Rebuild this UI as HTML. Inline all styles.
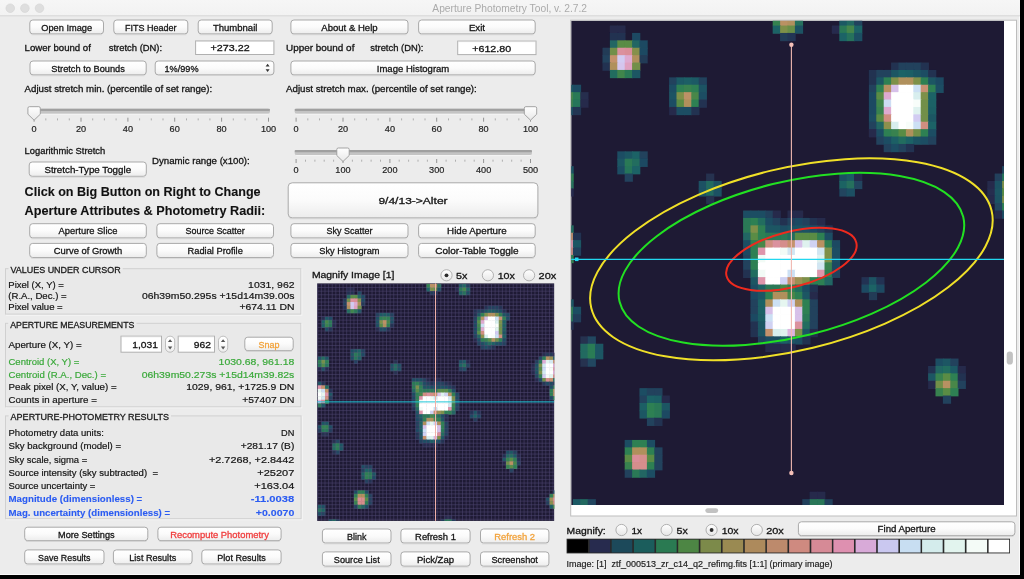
<!DOCTYPE html><html><head><meta charset="utf-8"><style>html,body{margin:0;padding:0;background:#000;overflow:hidden}svg{display:block}text{white-space:pre}</style></head><body><svg width="1024" height="579" viewBox="0 0 1024 579" font-family='"Liberation Sans", sans-serif'>
<defs>
<linearGradient id="bg" x1="0" y1="0" x2="0" y2="1"><stop offset="0" stop-color="#ffffff"/><stop offset="0.5" stop-color="#fbfbfb"/><stop offset="1" stop-color="#ececec"/></linearGradient>
<linearGradient id="trk" x1="0" y1="0" x2="0" y2="1"><stop offset="0" stop-color="#9c9c9c"/><stop offset="1" stop-color="#cfcfcf"/></linearGradient>
<linearGradient id="thm" x1="0" y1="0" x2="0" y2="1"><stop offset="0" stop-color="#ffffff"/><stop offset="1" stop-color="#e8e8e8"/></linearGradient>
<linearGradient id="rad" x1="0" y1="0" x2="0" y2="1"><stop offset="0" stop-color="#ffffff"/><stop offset="1" stop-color="#e6e6e6"/></linearGradient>
<linearGradient id="tb" x1="0" y1="0" x2="0" y2="1"><stop offset="0" stop-color="#f6f6f6"/><stop offset="1" stop-color="#f2f2f2"/></linearGradient>
</defs>
<rect x="0" y="0" width="1024" height="579" fill="#000"/>
<rect x="0" y="0" width="1020" height="575" fill="#ececec"/>
<path d="M1019.5,0 V574.5 H0" fill="none" stroke="#fafafa" stroke-width="1"/>
<rect x="0" y="0" width="1020" height="15.8" fill="url(#tb)"/>
<line x1="0" y1="15.8" x2="1020" y2="15.8" stroke="#d6d6d6" stroke-width="1"/>
<circle cx="10.25" cy="8.2" r="4.3" fill="#dedede" stroke="#d3d3d3" stroke-width="0.6"/>
<circle cx="24.9" cy="8.2" r="4.3" fill="#dedede" stroke="#d3d3d3" stroke-width="0.6"/>
<circle cx="39.5" cy="8.2" r="4.3" fill="#dedede" stroke="#d3d3d3" stroke-width="0.6"/>
<text x="432.3" y="12.3" font-size="10.4" fill="#ababab" stroke="#ababab" stroke-width="0" font-weight="normal" text-anchor="start" textLength="154.7" lengthAdjust="spacingAndGlyphs">Aperture Photometry Tool, v. 2.7.2</text>
<rect x="29.8" y="20.0" width="73.7" height="13.9" rx="3" fill="url(#bg)" stroke="#a9a9a9" stroke-width="1"/>
<line x1="31.3" y1="34.7" x2="102.0" y2="34.7" stroke="#d2d2d2" stroke-width="0.8"/>
<text x="41.3" y="30.6" font-size="9.6" fill="#141414" stroke="#141414" stroke-width="0.3" font-weight="normal" text-anchor="start" textLength="50.8" lengthAdjust="spacingAndGlyphs">Open Image</text>
<rect x="113.8" y="20.0" width="74.0" height="13.9" rx="3" fill="url(#bg)" stroke="#a9a9a9" stroke-width="1"/>
<line x1="115.3" y1="34.7" x2="186.3" y2="34.7" stroke="#d2d2d2" stroke-width="0.8"/>
<text x="125.0" y="30.6" font-size="9.6" fill="#141414" stroke="#141414" stroke-width="0.3" font-weight="normal" text-anchor="start" textLength="51.6" lengthAdjust="spacingAndGlyphs">FITS Header</text>
<rect x="198.2" y="20.0" width="74.0" height="13.9" rx="3" fill="url(#bg)" stroke="#a9a9a9" stroke-width="1"/>
<line x1="199.7" y1="34.7" x2="270.7" y2="34.7" stroke="#d2d2d2" stroke-width="0.8"/>
<text x="212.9" y="30.6" font-size="9.6" fill="#141414" stroke="#141414" stroke-width="0.3" font-weight="normal" text-anchor="start" textLength="44.5" lengthAdjust="spacingAndGlyphs">Thumbnail</text>
<rect x="290.9" y="20.0" width="117.1" height="13.9" rx="3" fill="url(#bg)" stroke="#a9a9a9" stroke-width="1"/>
<line x1="292.4" y1="34.7" x2="406.5" y2="34.7" stroke="#d2d2d2" stroke-width="0.8"/>
<text x="321.3" y="30.6" font-size="9.6" fill="#141414" stroke="#141414" stroke-width="0.3" font-weight="normal" text-anchor="start" textLength="56.3" lengthAdjust="spacingAndGlyphs">About &amp; Help</text>
<rect x="418.6" y="20.0" width="116.6" height="13.9" rx="3" fill="url(#bg)" stroke="#a9a9a9" stroke-width="1"/>
<line x1="420.1" y1="34.7" x2="533.7" y2="34.7" stroke="#d2d2d2" stroke-width="0.8"/>
<text x="468.9" y="30.6" font-size="9.6" fill="#141414" stroke="#141414" stroke-width="0.3" font-weight="normal" text-anchor="start" textLength="16.1" lengthAdjust="spacingAndGlyphs">Exit</text>
<text x="24.6" y="50.9" font-size="9.6" fill="#141414" stroke="#141414" stroke-width="0.3" font-weight="normal" text-anchor="start" textLength="66.3" lengthAdjust="spacingAndGlyphs">Lower bound of</text>
<text x="108.8" y="50.9" font-size="9.6" fill="#141414" stroke="#141414" stroke-width="0.3" font-weight="normal" text-anchor="start" textLength="53.3" lengthAdjust="spacingAndGlyphs">stretch (DN):</text>
<rect x="195.6" y="40.9" width="78.3" height="13.6" fill="#ffffff" stroke="#b0b0b0" stroke-width="1"/>
<line x1="196.1" y1="41.4" x2="273.4" y2="41.4" stroke="#d8d8d8" stroke-width="1"/>
<text x="210.6" y="51.3" font-size="9.6" fill="#141414" stroke="#141414" stroke-width="0.3" font-weight="normal" text-anchor="start" textLength="39.0" lengthAdjust="spacingAndGlyphs">+273.22</text>
<text x="286.0" y="50.9" font-size="9.6" fill="#141414" stroke="#141414" stroke-width="0.3" font-weight="normal" text-anchor="start" textLength="68.4" lengthAdjust="spacingAndGlyphs">Upper bound of</text>
<text x="370.2" y="50.9" font-size="9.6" fill="#141414" stroke="#141414" stroke-width="0.3" font-weight="normal" text-anchor="start" textLength="53.3" lengthAdjust="spacingAndGlyphs">stretch (DN):</text>
<rect x="457.7" y="41.1" width="78.3" height="13.5" fill="#ffffff" stroke="#b0b0b0" stroke-width="1"/>
<line x1="458.2" y1="41.6" x2="535.5" y2="41.6" stroke="#d8d8d8" stroke-width="1"/>
<text x="472.2" y="51.5" font-size="9.6" fill="#141414" stroke="#141414" stroke-width="0.3" font-weight="normal" text-anchor="start" textLength="39.0" lengthAdjust="spacingAndGlyphs">+612.80</text>
<rect x="30.0" y="61.0" width="116.2" height="13.9" rx="3" fill="url(#bg)" stroke="#a9a9a9" stroke-width="1"/>
<line x1="31.5" y1="75.7" x2="144.7" y2="75.7" stroke="#d2d2d2" stroke-width="0.8"/>
<text x="51.3" y="71.5" font-size="9.6" fill="#141414" stroke="#141414" stroke-width="0.3" font-weight="normal" text-anchor="start" textLength="73.6" lengthAdjust="spacingAndGlyphs">Stretch to Bounds</text>
<rect x="155.2" y="61.0" width="118.7" height="13.9" rx="3" fill="url(#bg)" stroke="#a9a9a9" stroke-width="1"/>
<text x="164.5" y="71.6" font-size="9.6" fill="#141414" stroke="#141414" stroke-width="0.3" font-weight="normal" text-anchor="start" textLength="34.1" lengthAdjust="spacingAndGlyphs">1%/99%</text>
<path d="M265.6,66.6 L267.6,63.8 L269.6,66.6 Z M265.6,69.2 L267.6,72.0 L269.6,69.2 Z" fill="#333"/>
<rect x="290.9" y="61.0" width="244.3" height="13.9" rx="3" fill="url(#bg)" stroke="#a9a9a9" stroke-width="1"/>
<line x1="292.4" y1="75.7" x2="533.7" y2="75.7" stroke="#d2d2d2" stroke-width="0.8"/>
<text x="376.8" y="71.5" font-size="9.6" fill="#141414" stroke="#141414" stroke-width="0.3" font-weight="normal" text-anchor="start" textLength="72.5" lengthAdjust="spacingAndGlyphs">Image Histogram</text>
<text x="24.6" y="92.2" font-size="9.6" fill="#141414" stroke="#141414" stroke-width="0.3" font-weight="normal" text-anchor="start" textLength="187.6" lengthAdjust="spacingAndGlyphs">Adjust stretch min. (percentile of set range):</text>
<text x="286.0" y="92.2" font-size="9.6" fill="#141414" stroke="#141414" stroke-width="0.3" font-weight="normal" text-anchor="start" textLength="190.8" lengthAdjust="spacingAndGlyphs">Adjust stretch max. (percentile of set range):</text>
<rect x="32.6" y="108.8" width="237.4" height="5" rx="2.2" fill="#c4c4c4"/>
<rect x="32.6" y="108.8" width="237.4" height="2.1" rx="1" fill="#a0a0a0"/>
<line x1="34.1" y1="114.3" x2="268.5" y2="114.3" stroke="#f6f6f6" stroke-width="0.8"/>
<line x1="34.1" y1="117.7" x2="34.1" y2="121.7" stroke="#8a8a8a" stroke-width="0.9"/>
<line x1="45.8" y1="118.4" x2="45.8" y2="120.4" stroke="#a0a0a0" stroke-width="0.8"/>
<line x1="57.5" y1="118.4" x2="57.5" y2="120.4" stroke="#a0a0a0" stroke-width="0.8"/>
<line x1="69.3" y1="118.4" x2="69.3" y2="120.4" stroke="#a0a0a0" stroke-width="0.8"/>
<text x="31.6" y="132.0" font-size="9" fill="#222222" stroke="#222222" stroke-width="0.18" font-weight="normal" text-anchor="start" textLength="5.1" lengthAdjust="spacingAndGlyphs">0</text>
<line x1="81.0" y1="117.7" x2="81.0" y2="121.7" stroke="#8a8a8a" stroke-width="0.9"/>
<line x1="92.7" y1="118.4" x2="92.7" y2="120.4" stroke="#a0a0a0" stroke-width="0.8"/>
<line x1="104.4" y1="118.4" x2="104.4" y2="120.4" stroke="#a0a0a0" stroke-width="0.8"/>
<line x1="116.1" y1="118.4" x2="116.1" y2="120.4" stroke="#a0a0a0" stroke-width="0.8"/>
<text x="75.9" y="132.0" font-size="9" fill="#222222" stroke="#222222" stroke-width="0.18" font-weight="normal" text-anchor="start" textLength="10.2" lengthAdjust="spacingAndGlyphs">20</text>
<line x1="127.9" y1="117.7" x2="127.9" y2="121.7" stroke="#8a8a8a" stroke-width="0.9"/>
<line x1="139.6" y1="118.4" x2="139.6" y2="120.4" stroke="#a0a0a0" stroke-width="0.8"/>
<line x1="151.3" y1="118.4" x2="151.3" y2="120.4" stroke="#a0a0a0" stroke-width="0.8"/>
<line x1="163.0" y1="118.4" x2="163.0" y2="120.4" stroke="#a0a0a0" stroke-width="0.8"/>
<text x="122.8" y="132.0" font-size="9" fill="#222222" stroke="#222222" stroke-width="0.18" font-weight="normal" text-anchor="start" textLength="10.2" lengthAdjust="spacingAndGlyphs">40</text>
<line x1="174.7" y1="117.7" x2="174.7" y2="121.7" stroke="#8a8a8a" stroke-width="0.9"/>
<line x1="186.5" y1="118.4" x2="186.5" y2="120.4" stroke="#a0a0a0" stroke-width="0.8"/>
<line x1="198.2" y1="118.4" x2="198.2" y2="120.4" stroke="#a0a0a0" stroke-width="0.8"/>
<line x1="209.9" y1="118.4" x2="209.9" y2="120.4" stroke="#a0a0a0" stroke-width="0.8"/>
<text x="169.6" y="132.0" font-size="9" fill="#222222" stroke="#222222" stroke-width="0.18" font-weight="normal" text-anchor="start" textLength="10.2" lengthAdjust="spacingAndGlyphs">60</text>
<line x1="221.6" y1="117.7" x2="221.6" y2="121.7" stroke="#8a8a8a" stroke-width="0.9"/>
<line x1="233.3" y1="118.4" x2="233.3" y2="120.4" stroke="#a0a0a0" stroke-width="0.8"/>
<line x1="245.1" y1="118.4" x2="245.1" y2="120.4" stroke="#a0a0a0" stroke-width="0.8"/>
<line x1="256.8" y1="118.4" x2="256.8" y2="120.4" stroke="#a0a0a0" stroke-width="0.8"/>
<text x="216.5" y="132.0" font-size="9" fill="#222222" stroke="#222222" stroke-width="0.18" font-weight="normal" text-anchor="start" textLength="10.2" lengthAdjust="spacingAndGlyphs">80</text>
<line x1="268.5" y1="117.7" x2="268.5" y2="121.7" stroke="#8a8a8a" stroke-width="0.9"/>
<text x="260.9" y="132.0" font-size="9" fill="#222222" stroke="#222222" stroke-width="0.18" font-weight="normal" text-anchor="start" textLength="15.3" lengthAdjust="spacingAndGlyphs">100</text>
<path d="M27.9,108.2 Q27.9,106.7 29.4,106.7 L38.8,106.7 Q40.3,106.7 40.3,108.2 L40.3,114.2 L34.1,120.2 L27.9,114.2 Z" fill="url(#thm)" stroke="#9a9a9a" stroke-width="0.9"/>
<rect x="294.6" y="108.8" width="237.4" height="5" rx="2.2" fill="#c4c4c4"/>
<rect x="294.6" y="108.8" width="237.4" height="2.1" rx="1" fill="#a0a0a0"/>
<line x1="296.1" y1="114.3" x2="530.5" y2="114.3" stroke="#f6f6f6" stroke-width="0.8"/>
<line x1="296.1" y1="117.7" x2="296.1" y2="121.7" stroke="#8a8a8a" stroke-width="0.9"/>
<line x1="307.8" y1="118.4" x2="307.8" y2="120.4" stroke="#a0a0a0" stroke-width="0.8"/>
<line x1="319.5" y1="118.4" x2="319.5" y2="120.4" stroke="#a0a0a0" stroke-width="0.8"/>
<line x1="331.3" y1="118.4" x2="331.3" y2="120.4" stroke="#a0a0a0" stroke-width="0.8"/>
<text x="293.6" y="132.0" font-size="9" fill="#222222" stroke="#222222" stroke-width="0.18" font-weight="normal" text-anchor="start" textLength="5.1" lengthAdjust="spacingAndGlyphs">0</text>
<line x1="343.0" y1="117.7" x2="343.0" y2="121.7" stroke="#8a8a8a" stroke-width="0.9"/>
<line x1="354.7" y1="118.4" x2="354.7" y2="120.4" stroke="#a0a0a0" stroke-width="0.8"/>
<line x1="366.4" y1="118.4" x2="366.4" y2="120.4" stroke="#a0a0a0" stroke-width="0.8"/>
<line x1="378.1" y1="118.4" x2="378.1" y2="120.4" stroke="#a0a0a0" stroke-width="0.8"/>
<text x="337.9" y="132.0" font-size="9" fill="#222222" stroke="#222222" stroke-width="0.18" font-weight="normal" text-anchor="start" textLength="10.2" lengthAdjust="spacingAndGlyphs">20</text>
<line x1="389.9" y1="117.7" x2="389.9" y2="121.7" stroke="#8a8a8a" stroke-width="0.9"/>
<line x1="401.6" y1="118.4" x2="401.6" y2="120.4" stroke="#a0a0a0" stroke-width="0.8"/>
<line x1="413.3" y1="118.4" x2="413.3" y2="120.4" stroke="#a0a0a0" stroke-width="0.8"/>
<line x1="425.0" y1="118.4" x2="425.0" y2="120.4" stroke="#a0a0a0" stroke-width="0.8"/>
<text x="384.8" y="132.0" font-size="9" fill="#222222" stroke="#222222" stroke-width="0.18" font-weight="normal" text-anchor="start" textLength="10.2" lengthAdjust="spacingAndGlyphs">40</text>
<line x1="436.7" y1="117.7" x2="436.7" y2="121.7" stroke="#8a8a8a" stroke-width="0.9"/>
<line x1="448.5" y1="118.4" x2="448.5" y2="120.4" stroke="#a0a0a0" stroke-width="0.8"/>
<line x1="460.2" y1="118.4" x2="460.2" y2="120.4" stroke="#a0a0a0" stroke-width="0.8"/>
<line x1="471.9" y1="118.4" x2="471.9" y2="120.4" stroke="#a0a0a0" stroke-width="0.8"/>
<text x="431.6" y="132.0" font-size="9" fill="#222222" stroke="#222222" stroke-width="0.18" font-weight="normal" text-anchor="start" textLength="10.2" lengthAdjust="spacingAndGlyphs">60</text>
<line x1="483.6" y1="117.7" x2="483.6" y2="121.7" stroke="#8a8a8a" stroke-width="0.9"/>
<line x1="495.3" y1="118.4" x2="495.3" y2="120.4" stroke="#a0a0a0" stroke-width="0.8"/>
<line x1="507.1" y1="118.4" x2="507.1" y2="120.4" stroke="#a0a0a0" stroke-width="0.8"/>
<line x1="518.8" y1="118.4" x2="518.8" y2="120.4" stroke="#a0a0a0" stroke-width="0.8"/>
<text x="478.5" y="132.0" font-size="9" fill="#222222" stroke="#222222" stroke-width="0.18" font-weight="normal" text-anchor="start" textLength="10.2" lengthAdjust="spacingAndGlyphs">80</text>
<line x1="530.5" y1="117.7" x2="530.5" y2="121.7" stroke="#8a8a8a" stroke-width="0.9"/>
<text x="522.9" y="132.0" font-size="9" fill="#222222" stroke="#222222" stroke-width="0.18" font-weight="normal" text-anchor="start" textLength="15.3" lengthAdjust="spacingAndGlyphs">100</text>
<path d="M524.3,108.2 Q524.3,106.7 525.8,106.7 L535.2,106.7 Q536.7,106.7 536.7,108.2 L536.7,114.2 L530.5,120.2 L524.3,114.2 Z" fill="url(#thm)" stroke="#9a9a9a" stroke-width="0.9"/>
<text x="24.6" y="153.7" font-size="9.6" fill="#141414" stroke="#141414" stroke-width="0.3" font-weight="normal" text-anchor="start" textLength="80.6" lengthAdjust="spacingAndGlyphs">Logarithmic Stretch</text>
<rect x="29.2" y="162.0" width="117.1" height="14.3" rx="3" fill="url(#bg)" stroke="#a9a9a9" stroke-width="1"/>
<line x1="30.7" y1="177.1" x2="144.8" y2="177.1" stroke="#d2d2d2" stroke-width="0.8"/>
<text x="44.4" y="172.8" font-size="9.6" fill="#141414" stroke="#141414" stroke-width="0.3" font-weight="normal" text-anchor="start" textLength="86.7" lengthAdjust="spacingAndGlyphs">Stretch-Type Toggle</text>
<text x="152.0" y="163.8" font-size="9.6" fill="#141414" stroke="#141414" stroke-width="0.3" font-weight="normal" text-anchor="start" textLength="97.7" lengthAdjust="spacingAndGlyphs">Dynamic range (x100):</text>
<rect x="294.6" y="150.1" width="237.4" height="5" rx="2.2" fill="#c4c4c4"/>
<rect x="294.6" y="150.1" width="237.4" height="2.1" rx="1" fill="#a0a0a0"/>
<line x1="296.1" y1="155.6" x2="530.5" y2="155.6" stroke="#f6f6f6" stroke-width="0.8"/>
<line x1="296.1" y1="159.0" x2="296.1" y2="163.0" stroke="#8a8a8a" stroke-width="0.9"/>
<line x1="305.5" y1="159.7" x2="305.5" y2="161.7" stroke="#a0a0a0" stroke-width="0.8"/>
<line x1="314.9" y1="159.7" x2="314.9" y2="161.7" stroke="#a0a0a0" stroke-width="0.8"/>
<line x1="324.2" y1="159.7" x2="324.2" y2="161.7" stroke="#a0a0a0" stroke-width="0.8"/>
<line x1="333.6" y1="159.7" x2="333.6" y2="161.7" stroke="#a0a0a0" stroke-width="0.8"/>
<text x="293.6" y="173.3" font-size="9" fill="#222222" stroke="#222222" stroke-width="0.18" font-weight="normal" text-anchor="start" textLength="5.1" lengthAdjust="spacingAndGlyphs">0</text>
<line x1="343.0" y1="159.0" x2="343.0" y2="163.0" stroke="#8a8a8a" stroke-width="0.9"/>
<line x1="352.4" y1="159.7" x2="352.4" y2="161.7" stroke="#a0a0a0" stroke-width="0.8"/>
<line x1="361.7" y1="159.7" x2="361.7" y2="161.7" stroke="#a0a0a0" stroke-width="0.8"/>
<line x1="371.1" y1="159.7" x2="371.1" y2="161.7" stroke="#a0a0a0" stroke-width="0.8"/>
<line x1="380.5" y1="159.7" x2="380.5" y2="161.7" stroke="#a0a0a0" stroke-width="0.8"/>
<text x="335.3" y="173.3" font-size="9" fill="#222222" stroke="#222222" stroke-width="0.18" font-weight="normal" text-anchor="start" textLength="15.3" lengthAdjust="spacingAndGlyphs">100</text>
<line x1="389.9" y1="159.0" x2="389.9" y2="163.0" stroke="#8a8a8a" stroke-width="0.9"/>
<line x1="399.2" y1="159.7" x2="399.2" y2="161.7" stroke="#a0a0a0" stroke-width="0.8"/>
<line x1="408.6" y1="159.7" x2="408.6" y2="161.7" stroke="#a0a0a0" stroke-width="0.8"/>
<line x1="418.0" y1="159.7" x2="418.0" y2="161.7" stroke="#a0a0a0" stroke-width="0.8"/>
<line x1="427.4" y1="159.7" x2="427.4" y2="161.7" stroke="#a0a0a0" stroke-width="0.8"/>
<text x="382.2" y="173.3" font-size="9" fill="#222222" stroke="#222222" stroke-width="0.18" font-weight="normal" text-anchor="start" textLength="15.3" lengthAdjust="spacingAndGlyphs">200</text>
<line x1="436.7" y1="159.0" x2="436.7" y2="163.0" stroke="#8a8a8a" stroke-width="0.9"/>
<line x1="446.1" y1="159.7" x2="446.1" y2="161.7" stroke="#a0a0a0" stroke-width="0.8"/>
<line x1="455.5" y1="159.7" x2="455.5" y2="161.7" stroke="#a0a0a0" stroke-width="0.8"/>
<line x1="464.9" y1="159.7" x2="464.9" y2="161.7" stroke="#a0a0a0" stroke-width="0.8"/>
<line x1="474.2" y1="159.7" x2="474.2" y2="161.7" stroke="#a0a0a0" stroke-width="0.8"/>
<text x="429.1" y="173.3" font-size="9" fill="#222222" stroke="#222222" stroke-width="0.18" font-weight="normal" text-anchor="start" textLength="15.3" lengthAdjust="spacingAndGlyphs">300</text>
<line x1="483.6" y1="159.0" x2="483.6" y2="163.0" stroke="#8a8a8a" stroke-width="0.9"/>
<line x1="493.0" y1="159.7" x2="493.0" y2="161.7" stroke="#a0a0a0" stroke-width="0.8"/>
<line x1="502.4" y1="159.7" x2="502.4" y2="161.7" stroke="#a0a0a0" stroke-width="0.8"/>
<line x1="511.7" y1="159.7" x2="511.7" y2="161.7" stroke="#a0a0a0" stroke-width="0.8"/>
<line x1="521.1" y1="159.7" x2="521.1" y2="161.7" stroke="#a0a0a0" stroke-width="0.8"/>
<text x="476.0" y="173.3" font-size="9" fill="#222222" stroke="#222222" stroke-width="0.18" font-weight="normal" text-anchor="start" textLength="15.3" lengthAdjust="spacingAndGlyphs">400</text>
<line x1="530.5" y1="159.0" x2="530.5" y2="163.0" stroke="#8a8a8a" stroke-width="0.9"/>
<text x="522.9" y="173.3" font-size="9" fill="#222222" stroke="#222222" stroke-width="0.18" font-weight="normal" text-anchor="start" textLength="15.3" lengthAdjust="spacingAndGlyphs">500</text>
<path d="M336.8,149.5 Q336.8,148.0 338.3,148.0 L347.7,148.0 Q349.2,148.0 349.2,149.5 L349.2,155.5 L343.0,161.5 L336.8,155.5 Z" fill="url(#thm)" stroke="#9a9a9a" stroke-width="0.9"/>
<text x="24.6" y="195.5" font-size="12" fill="#111" stroke="#111" stroke-width="0.1" font-weight="bold" text-anchor="start" textLength="236.0" lengthAdjust="spacingAndGlyphs">Click on Big Button on Right to Change</text>
<text x="24.6" y="214.6" font-size="12" fill="#111" stroke="#111" stroke-width="0.1" font-weight="bold" text-anchor="start" textLength="240.6" lengthAdjust="spacingAndGlyphs">Aperture Attributes &amp; Photometry Radii:</text>
<rect x="288.2" y="182.8" width="249.7" height="35.1" rx="4" fill="url(#bg)" stroke="#a9a9a9" stroke-width="1"/>
<line x1="289.7" y1="218.7" x2="536.4" y2="218.7" stroke="#d2d2d2" stroke-width="0.8"/>
<text x="378.4" y="203.8" font-size="9.6" fill="#141414" stroke="#141414" stroke-width="0.3" font-weight="normal" text-anchor="start" textLength="69.2" lengthAdjust="spacingAndGlyphs">9/4/13-&gt;Alter</text>
<rect x="29.7" y="223.7" width="116.6" height="14.2" rx="3" fill="url(#bg)" stroke="#a9a9a9" stroke-width="1"/>
<line x1="31.2" y1="238.7" x2="144.8" y2="238.7" stroke="#d2d2d2" stroke-width="0.8"/>
<text x="58.6" y="234.4" font-size="9.6" fill="#141414" stroke="#141414" stroke-width="0.3" font-weight="normal" text-anchor="start" textLength="58.8" lengthAdjust="spacingAndGlyphs">Aperture Slice</text>
<rect x="156.9" y="223.7" width="116.6" height="14.2" rx="3" fill="url(#bg)" stroke="#a9a9a9" stroke-width="1"/>
<line x1="158.4" y1="238.7" x2="272.0" y2="238.7" stroke="#d2d2d2" stroke-width="0.8"/>
<text x="185.5" y="234.4" font-size="9.6" fill="#141414" stroke="#141414" stroke-width="0.3" font-weight="normal" text-anchor="start" textLength="59.3" lengthAdjust="spacingAndGlyphs">Source Scatter</text>
<rect x="290.9" y="223.7" width="117.1" height="14.2" rx="3" fill="url(#bg)" stroke="#a9a9a9" stroke-width="1"/>
<line x1="292.4" y1="238.7" x2="406.5" y2="238.7" stroke="#d2d2d2" stroke-width="0.8"/>
<text x="326.5" y="234.4" font-size="9.6" fill="#141414" stroke="#141414" stroke-width="0.3" font-weight="normal" text-anchor="start" textLength="45.9" lengthAdjust="spacingAndGlyphs">Sky Scatter</text>
<rect x="418.6" y="223.7" width="116.6" height="14.2" rx="3" fill="url(#bg)" stroke="#a9a9a9" stroke-width="1"/>
<line x1="420.1" y1="238.7" x2="533.7" y2="238.7" stroke="#d2d2d2" stroke-width="0.8"/>
<text x="447.1" y="234.4" font-size="9.6" fill="#141414" stroke="#141414" stroke-width="0.3" font-weight="normal" text-anchor="start" textLength="59.6" lengthAdjust="spacingAndGlyphs">Hide Aperture</text>
<rect x="29.7" y="243.4" width="116.6" height="14.1" rx="3" fill="url(#bg)" stroke="#a9a9a9" stroke-width="1"/>
<line x1="31.2" y1="258.3" x2="144.8" y2="258.3" stroke="#d2d2d2" stroke-width="0.8"/>
<text x="53.8" y="254.0" font-size="9.6" fill="#141414" stroke="#141414" stroke-width="0.3" font-weight="normal" text-anchor="start" textLength="68.4" lengthAdjust="spacingAndGlyphs">Curve of Growth</text>
<rect x="156.9" y="243.4" width="116.6" height="14.1" rx="3" fill="url(#bg)" stroke="#a9a9a9" stroke-width="1"/>
<line x1="158.4" y1="258.3" x2="272.0" y2="258.3" stroke="#d2d2d2" stroke-width="0.8"/>
<text x="187.6" y="254.0" font-size="9.6" fill="#141414" stroke="#141414" stroke-width="0.3" font-weight="normal" text-anchor="start" textLength="55.2" lengthAdjust="spacingAndGlyphs">Radial Profile</text>
<rect x="290.9" y="243.4" width="117.1" height="14.1" rx="3" fill="url(#bg)" stroke="#a9a9a9" stroke-width="1"/>
<line x1="292.4" y1="258.3" x2="406.5" y2="258.3" stroke="#d2d2d2" stroke-width="0.8"/>
<text x="319.3" y="254.0" font-size="9.6" fill="#141414" stroke="#141414" stroke-width="0.3" font-weight="normal" text-anchor="start" textLength="60.2" lengthAdjust="spacingAndGlyphs">Sky Histogram</text>
<rect x="418.6" y="243.4" width="116.6" height="14.1" rx="3" fill="url(#bg)" stroke="#a9a9a9" stroke-width="1"/>
<line x1="420.1" y1="258.3" x2="533.7" y2="258.3" stroke="#d2d2d2" stroke-width="0.8"/>
<text x="435.2" y="254.0" font-size="9.6" fill="#141414" stroke="#141414" stroke-width="0.3" font-weight="normal" text-anchor="start" textLength="83.4" lengthAdjust="spacingAndGlyphs">Color-Table Toggle</text>
<rect x="6.5" y="269.7" width="295.3" height="45.4" fill="none" stroke="#f8f8f8" stroke-width="1"/>
<rect x="5.5" y="268.7" width="295.3" height="45.4" fill="#e9e9e9" stroke="#d0d0d0" stroke-width="1"/>
<rect x="8.5" y="267.2" width="114.2" height="3" fill="#ececec"/>
<text x="10.5" y="272.8" font-size="9.6" fill="#1a1a1a" stroke="#1a1a1a" stroke-width="0.3" font-weight="normal" text-anchor="start" textLength="110.2" lengthAdjust="spacingAndGlyphs">VALUES UNDER CURSOR</text>
<text x="8.3" y="287.8" font-size="8.9" fill="#141414" stroke="#141414" stroke-width="0.18" font-weight="normal" text-anchor="start" textLength="55.6" lengthAdjust="spacingAndGlyphs">Pixel (X, Y) =</text>
<text x="248.1" y="287.8" font-size="8.9" fill="#141414" stroke="#141414" stroke-width="0.18" font-weight="normal" text-anchor="start" textLength="46.4" lengthAdjust="spacingAndGlyphs">1031, 962</text>
<text x="8.3" y="298.8" font-size="8.9" fill="#141414" stroke="#141414" stroke-width="0.18" font-weight="normal" text-anchor="start" textLength="58.3" lengthAdjust="spacingAndGlyphs">(R.A., Dec.) =</text>
<text x="141.9" y="298.8" font-size="8.9" fill="#141414" stroke="#141414" stroke-width="0.18" font-weight="normal" text-anchor="start" textLength="152.6" lengthAdjust="spacingAndGlyphs">06h39m50.295s +15d14m39.00s</text>
<text x="8.3" y="309.8" font-size="8.9" fill="#141414" stroke="#141414" stroke-width="0.18" font-weight="normal" text-anchor="start" textLength="54.4" lengthAdjust="spacingAndGlyphs">Pixel value =</text>
<text x="239.4" y="309.8" font-size="8.9" fill="#141414" stroke="#141414" stroke-width="0.18" font-weight="normal" text-anchor="start" textLength="55.1" lengthAdjust="spacingAndGlyphs">+674.11 DN</text>
<rect x="6.5" y="324.3" width="295.3" height="83.5" fill="none" stroke="#f8f8f8" stroke-width="1"/>
<rect x="5.5" y="323.3" width="295.3" height="83.5" fill="#e9e9e9" stroke="#d0d0d0" stroke-width="1"/>
<rect x="8.2" y="321.8" width="128.2" height="3" fill="#ececec"/>
<text x="10.2" y="327.5" font-size="9.6" fill="#1a1a1a" stroke="#1a1a1a" stroke-width="0.3" font-weight="normal" text-anchor="start" textLength="124.2" lengthAdjust="spacingAndGlyphs">APERTURE MEASUREMENTS</text>
<text x="8.5" y="348.3" font-size="8.9" fill="#141414" stroke="#141414" stroke-width="0.18" font-weight="normal" text-anchor="start" textLength="73.2" lengthAdjust="spacingAndGlyphs">Aperture (X, Y) =</text>
<rect x="121.0" y="336.2" width="40.5" height="16.0" fill="#ffffff" stroke="#b0b0b0" stroke-width="1"/>
<line x1="121.5" y1="336.7" x2="161.0" y2="336.7" stroke="#d8d8d8" stroke-width="1"/>
<text x="132.3" y="347.8" font-size="9.6" fill="#141414" stroke="#141414" stroke-width="0.3" font-weight="normal" text-anchor="start" textLength="25.7" lengthAdjust="spacingAndGlyphs">1,031</text>
<rect x="178.2" y="336.2" width="36.3" height="16.0" fill="#ffffff" stroke="#b0b0b0" stroke-width="1"/>
<line x1="178.7" y1="336.7" x2="214.0" y2="336.7" stroke="#d8d8d8" stroke-width="1"/>
<text x="193.8" y="347.8" font-size="9.6" fill="#141414" stroke="#141414" stroke-width="0.3" font-weight="normal" text-anchor="start" textLength="17.2" lengthAdjust="spacingAndGlyphs">962</text>
<rect x="165.5" y="336.2" width="9.2" height="16" rx="4.5" fill="url(#bg)" stroke="#b0b0b0" stroke-width="0.8"/>
<path d="M167.9,342.0 L170.1,339.2 L172.3,342.0 Z M167.9,346.6 L170.1,349.4 L172.3,346.6 Z" fill="#555"/>
<rect x="218.5" y="336.2" width="9.2" height="16" rx="4.5" fill="url(#bg)" stroke="#b0b0b0" stroke-width="0.8"/>
<path d="M220.9,342.0 L223.1,339.2 L225.3,342.0 Z M220.9,346.6 L223.1,349.4 L225.3,346.6 Z" fill="#555"/>
<rect x="244.8" y="337.2" width="48.4" height="13.5" rx="3" fill="url(#bg)" stroke="#a9a9a9" stroke-width="1"/>
<line x1="246.3" y1="351.5" x2="291.7" y2="351.5" stroke="#d2d2d2" stroke-width="0.8"/>
<text x="258.6" y="347.6" font-size="9.6" fill="#f2a23a" stroke="#f2a23a" stroke-width="0.3" font-weight="normal" text-anchor="start" textLength="20.9" lengthAdjust="spacingAndGlyphs">Snap</text>
<text x="8.5" y="365.2" font-size="8.9" fill="#3aa93a" stroke="#3aa93a" stroke-width="0.18" font-weight="normal" text-anchor="start" textLength="70.8" lengthAdjust="spacingAndGlyphs">Centroid (X, Y) =</text>
<text x="218.6" y="365.2" font-size="8.9" fill="#3aa93a" stroke="#3aa93a" stroke-width="0.18" font-weight="normal" text-anchor="start" textLength="75.7" lengthAdjust="spacingAndGlyphs">1030.68, 961.18</text>
<text x="8.5" y="377.9" font-size="8.9" fill="#3aa93a" stroke="#3aa93a" stroke-width="0.18" font-weight="normal" text-anchor="start" textLength="97.5" lengthAdjust="spacingAndGlyphs">Centroid (R.A., Dec.) =</text>
<text x="141.7" y="377.9" font-size="8.9" fill="#3aa93a" stroke="#3aa93a" stroke-width="0.18" font-weight="normal" text-anchor="start" textLength="152.6" lengthAdjust="spacingAndGlyphs">06h39m50.273s +15d14m39.82s</text>
<text x="8.5" y="390.3" font-size="8.9" fill="#141414" stroke="#141414" stroke-width="0.18" font-weight="normal" text-anchor="start" textLength="108.1" lengthAdjust="spacingAndGlyphs">Peak pixel (X, Y, value) =</text>
<text x="186.2" y="390.3" font-size="8.9" fill="#141414" stroke="#141414" stroke-width="0.18" font-weight="normal" text-anchor="start" textLength="108.1" lengthAdjust="spacingAndGlyphs">1029, 961, +1725.9 DN</text>
<text x="8.5" y="403.1" font-size="8.9" fill="#141414" stroke="#141414" stroke-width="0.18" font-weight="normal" text-anchor="start" textLength="88.4" lengthAdjust="spacingAndGlyphs">Counts in aperture =</text>
<text x="242.2" y="403.1" font-size="8.9" fill="#141414" stroke="#141414" stroke-width="0.18" font-weight="normal" text-anchor="start" textLength="52.1" lengthAdjust="spacingAndGlyphs">+57407 DN</text>
<rect x="6.5" y="416.9" width="295.6" height="102.8" fill="none" stroke="#f8f8f8" stroke-width="1"/>
<rect x="5.5" y="415.9" width="295.6" height="102.8" fill="#e9e9e9" stroke="#d0d0d0" stroke-width="1"/>
<rect x="8.6" y="414.4" width="162.4" height="3" fill="#ececec"/>
<text x="10.6" y="419.8" font-size="9.6" fill="#1a1a1a" stroke="#1a1a1a" stroke-width="0.3" font-weight="normal" text-anchor="start" textLength="158.4" lengthAdjust="spacingAndGlyphs">APERTURE-PHOTOMETRY RESULTS</text>
<text x="8.5" y="436.2" font-size="8.9" fill="#141414" stroke="#141414" stroke-width="0.18" font-weight="normal" text-anchor="start" textLength="95.3" lengthAdjust="spacingAndGlyphs">Photometry data units:</text>
<text x="281.0" y="436.2" font-size="8.9" fill="#141414" stroke="#141414" stroke-width="0.18" font-weight="normal" text-anchor="start" textLength="13.3" lengthAdjust="spacingAndGlyphs">DN</text>
<text x="8.5" y="449.3" font-size="8.9" fill="#141414" stroke="#141414" stroke-width="0.18" font-weight="normal" text-anchor="start" textLength="112.6" lengthAdjust="spacingAndGlyphs">Sky background (model) =</text>
<text x="240.7" y="449.3" font-size="8.9" fill="#141414" stroke="#141414" stroke-width="0.18" font-weight="normal" text-anchor="start" textLength="53.6" lengthAdjust="spacingAndGlyphs">+281.17 (B)</text>
<text x="8.5" y="462.6" font-size="8.9" fill="#141414" stroke="#141414" stroke-width="0.18" font-weight="normal" text-anchor="start" textLength="78.7" lengthAdjust="spacingAndGlyphs">Sky scale, sigma =</text>
<text x="208.9" y="462.6" font-size="8.9" fill="#141414" stroke="#141414" stroke-width="0.18" font-weight="normal" text-anchor="start" textLength="85.4" lengthAdjust="spacingAndGlyphs">+2.7268, +2.8442</text>
<text x="8.5" y="475.7" font-size="8.9" fill="#141414" stroke="#141414" stroke-width="0.18" font-weight="normal" text-anchor="start" textLength="149.5" lengthAdjust="spacingAndGlyphs">Source intensity (sky subtracted)  =</text>
<text x="257.3" y="475.7" font-size="8.9" fill="#141414" stroke="#141414" stroke-width="0.18" font-weight="normal" text-anchor="start" textLength="37.0" lengthAdjust="spacingAndGlyphs">+25207</text>
<text x="8.5" y="488.7" font-size="8.9" fill="#141414" stroke="#141414" stroke-width="0.18" font-weight="normal" text-anchor="start" textLength="86.9" lengthAdjust="spacingAndGlyphs">Source uncertainty =</text>
<text x="254.3" y="488.7" font-size="8.9" fill="#141414" stroke="#141414" stroke-width="0.18" font-weight="normal" text-anchor="start" textLength="40.0" lengthAdjust="spacingAndGlyphs">+163.04</text>
<text x="8.5" y="502.2" font-size="9.2" fill="#2b5cf2" stroke="#2b5cf2" stroke-width="0.1" font-weight="bold" text-anchor="start" textLength="133.8" lengthAdjust="spacingAndGlyphs">Magnitude (dimensionless) =</text>
<text x="250.7" y="502.2" font-size="9.2" fill="#2b5cf2" stroke="#2b5cf2" stroke-width="0.1" font-weight="bold" text-anchor="start" textLength="43.6" lengthAdjust="spacingAndGlyphs">-11.0038</text>
<text x="8.5" y="515.5" font-size="9.2" fill="#2b5cf2" stroke="#2b5cf2" stroke-width="0.1" font-weight="bold" text-anchor="start" textLength="161.6" lengthAdjust="spacingAndGlyphs">Mag. uncertainty (dimensionless) =</text>
<text x="255.8" y="515.5" font-size="9.2" fill="#2b5cf2" stroke="#2b5cf2" stroke-width="0.1" font-weight="bold" text-anchor="start" textLength="38.5" lengthAdjust="spacingAndGlyphs">+0.0070</text>
<rect x="24.7" y="527.2" width="123.1" height="13.5" rx="3" fill="url(#bg)" stroke="#a9a9a9" stroke-width="1"/>
<line x1="26.2" y1="541.5" x2="146.3" y2="541.5" stroke="#d2d2d2" stroke-width="0.8"/>
<text x="58.0" y="537.6" font-size="9.6" fill="#141414" stroke="#141414" stroke-width="0.3" font-weight="normal" text-anchor="start" textLength="56.6" lengthAdjust="spacingAndGlyphs">More Settings</text>
<rect x="157.9" y="527.2" width="123.2" height="13.5" rx="3" fill="url(#bg)" stroke="#a9a9a9" stroke-width="1"/>
<line x1="159.4" y1="541.5" x2="279.6" y2="541.5" stroke="#d2d2d2" stroke-width="0.8"/>
<text x="170.2" y="537.6" font-size="9.6" fill="#f03c3c" stroke="#f03c3c" stroke-width="0.3" font-weight="normal" text-anchor="start" textLength="98.7" lengthAdjust="spacingAndGlyphs">Recompute Photometry</text>
<rect x="24.7" y="549.9" width="79.3" height="14.1" rx="3" fill="url(#bg)" stroke="#a9a9a9" stroke-width="1"/>
<line x1="26.2" y1="564.8" x2="102.5" y2="564.8" stroke="#d2d2d2" stroke-width="0.8"/>
<text x="38.1" y="560.6" font-size="9.6" fill="#141414" stroke="#141414" stroke-width="0.3" font-weight="normal" text-anchor="start" textLength="52.4" lengthAdjust="spacingAndGlyphs">Save Results</text>
<rect x="113.4" y="549.9" width="78.7" height="14.1" rx="3" fill="url(#bg)" stroke="#a9a9a9" stroke-width="1"/>
<line x1="114.9" y1="564.8" x2="190.6" y2="564.8" stroke="#d2d2d2" stroke-width="0.8"/>
<text x="129.3" y="560.6" font-size="9.6" fill="#141414" stroke="#141414" stroke-width="0.3" font-weight="normal" text-anchor="start" textLength="46.9" lengthAdjust="spacingAndGlyphs">List Results</text>
<rect x="201.8" y="549.9" width="79.3" height="14.1" rx="3" fill="url(#bg)" stroke="#a9a9a9" stroke-width="1"/>
<line x1="203.3" y1="564.8" x2="279.6" y2="564.8" stroke="#d2d2d2" stroke-width="0.8"/>
<text x="217.3" y="560.6" font-size="9.6" fill="#141414" stroke="#141414" stroke-width="0.3" font-weight="normal" text-anchor="start" textLength="48.4" lengthAdjust="spacingAndGlyphs">Plot Results</text>
<text x="311.9" y="278.0" font-size="9.6" fill="#141414" stroke="#141414" stroke-width="0.3" font-weight="normal" text-anchor="start" textLength="82.5" lengthAdjust="spacingAndGlyphs">Magnify Image [1]</text>
<circle cx="446.5" cy="275.3" r="5.6" fill="url(#rad)" stroke="#a8a8a8" stroke-width="0.9"/>
<circle cx="446.5" cy="275.3" r="1.9" fill="#2a2a2a"/>
<text x="456.0" y="278.7" font-size="9.6" fill="#141414" stroke="#141414" stroke-width="0.3" font-weight="normal" text-anchor="start" textLength="11.4" lengthAdjust="spacingAndGlyphs">5x</text>
<circle cx="487.9" cy="275.3" r="5.6" fill="url(#rad)" stroke="#a8a8a8" stroke-width="0.9"/>
<text x="497.7" y="278.7" font-size="9.6" fill="#141414" stroke="#141414" stroke-width="0.3" font-weight="normal" text-anchor="start" textLength="17.2" lengthAdjust="spacingAndGlyphs">10x</text>
<circle cx="529.1" cy="275.3" r="5.6" fill="url(#rad)" stroke="#a8a8a8" stroke-width="0.9"/>
<text x="538.6" y="278.7" font-size="9.6" fill="#141414" stroke="#141414" stroke-width="0.3" font-weight="normal" text-anchor="start" textLength="17.7" lengthAdjust="spacingAndGlyphs">20x</text>
<svg x="317.1" y="283.2" width="237.30" height="237.70" viewBox="317.1 283.2 237.30 237.70" overflow="hidden">
<rect x="317.1" y="283.2" width="237.30" height="237.70" fill="#1e1a34"/>
<filter id="softm" x="-2%" y="-2%" width="104%" height="104%"><feGaussianBlur stdDeviation="0.45"/></filter><g filter="url(#softm)">
<rect x="426.34" y="283.92" width="4.1" height="4.1" fill="#358250"/>
<rect x="429.96" y="283.92" width="4.1" height="4.1" fill="#ba9164"/>
<rect x="433.58" y="283.92" width="4.1" height="4.1" fill="#b2905e"/>
<rect x="437.20" y="283.92" width="4.1" height="4.1" fill="#25705d"/>
<rect x="458.92" y="283.92" width="4.1" height="4.1" fill="#1e5864"/>
<rect x="462.54" y="283.92" width="4.1" height="4.1" fill="#216862"/>
<rect x="466.16" y="283.92" width="4.1" height="4.1" fill="#21425d"/>
<rect x="346.70" y="287.54" width="4.1" height="4.1" fill="#262a4c"/>
<rect x="350.32" y="287.54" width="4.1" height="4.1" fill="#262a4c"/>
<rect x="426.34" y="287.54" width="4.1" height="4.1" fill="#1f6465"/>
<rect x="429.96" y="287.54" width="4.1" height="4.1" fill="#7e904a"/>
<rect x="433.58" y="287.54" width="4.1" height="4.1" fill="#698e46"/>
<rect x="437.20" y="287.54" width="4.1" height="4.1" fill="#1f5363"/>
<rect x="455.30" y="287.54" width="4.1" height="4.1" fill="#262c4d"/>
<rect x="458.92" y="287.54" width="4.1" height="4.1" fill="#2a7857"/>
<rect x="462.54" y="287.54" width="4.1" height="4.1" fill="#44864b"/>
<rect x="466.16" y="287.54" width="4.1" height="4.1" fill="#1e6366"/>
<rect x="346.70" y="291.16" width="4.1" height="4.1" fill="#243251"/>
<rect x="350.32" y="291.16" width="4.1" height="4.1" fill="#243251"/>
<rect x="357.56" y="291.16" width="4.1" height="4.1" fill="#1f4a62"/>
<rect x="429.96" y="291.16" width="4.1" height="4.1" fill="#223e59"/>
<rect x="433.58" y="291.16" width="4.1" height="4.1" fill="#243554"/>
<rect x="458.92" y="291.16" width="4.1" height="4.1" fill="#1e6366"/>
<rect x="462.54" y="291.16" width="4.1" height="4.1" fill="#27725b"/>
<rect x="466.16" y="291.16" width="4.1" height="4.1" fill="#1f4f63"/>
<rect x="346.70" y="294.78" width="4.1" height="4.1" fill="#206664"/>
<rect x="350.32" y="294.78" width="4.1" height="4.1" fill="#5a8c44"/>
<rect x="353.94" y="294.78" width="4.1" height="4.1" fill="#5a8c44"/>
<rect x="357.56" y="294.78" width="4.1" height="4.1" fill="#206664"/>
<rect x="361.18" y="294.78" width="4.1" height="4.1" fill="#1f4a62"/>
<rect x="343.08" y="298.40" width="4.1" height="4.1" fill="#233a57"/>
<rect x="346.70" y="298.40" width="4.1" height="4.1" fill="#728f48"/>
<rect x="350.32" y="298.40" width="4.1" height="4.1" fill="#db919e"/>
<rect x="353.94" y="298.40" width="4.1" height="4.1" fill="#da8e98"/>
<rect x="357.56" y="298.40" width="4.1" height="4.1" fill="#86904c"/>
<rect x="361.18" y="298.40" width="4.1" height="4.1" fill="#1f4a62"/>
<rect x="343.08" y="302.02" width="4.1" height="4.1" fill="#21425d"/>
<rect x="346.70" y="302.02" width="4.1" height="4.1" fill="#c4926c"/>
<rect x="350.32" y="302.02" width="4.1" height="4.1" fill="#d2ccf2"/>
<rect x="353.94" y="302.02" width="4.1" height="4.1" fill="#deaad0"/>
<rect x="357.56" y="302.02" width="4.1" height="4.1" fill="#b0905c"/>
<rect x="361.18" y="302.02" width="4.1" height="4.1" fill="#233a57"/>
<rect x="343.08" y="305.64" width="4.1" height="4.1" fill="#243251"/>
<rect x="346.70" y="305.64" width="4.1" height="4.1" fill="#b0905c"/>
<rect x="350.32" y="305.64" width="4.1" height="4.1" fill="#d5c6ee"/>
<rect x="353.94" y="305.64" width="4.1" height="4.1" fill="#dfa1c0"/>
<rect x="357.56" y="305.64" width="4.1" height="4.1" fill="#728f48"/>
<rect x="484.26" y="305.64" width="4.1" height="4.1" fill="#243251"/>
<rect x="487.88" y="305.64" width="4.1" height="4.1" fill="#21425d"/>
<rect x="491.50" y="305.64" width="4.1" height="4.1" fill="#21425d"/>
<rect x="495.12" y="305.64" width="4.1" height="4.1" fill="#21425d"/>
<rect x="498.74" y="305.64" width="4.1" height="4.1" fill="#243251"/>
<rect x="346.70" y="309.26" width="4.1" height="4.1" fill="#246d5f"/>
<rect x="350.32" y="309.26" width="4.1" height="4.1" fill="#40854c"/>
<rect x="353.94" y="309.26" width="4.1" height="4.1" fill="#2a7957"/>
<rect x="357.56" y="309.26" width="4.1" height="4.1" fill="#1f5664"/>
<rect x="473.40" y="309.26" width="4.1" height="4.1" fill="#243251"/>
<rect x="477.02" y="309.26" width="4.1" height="4.1" fill="#21425d"/>
<rect x="480.64" y="309.26" width="4.1" height="4.1" fill="#21425d"/>
<rect x="484.26" y="309.26" width="4.1" height="4.1" fill="#1f5664"/>
<rect x="487.88" y="309.26" width="4.1" height="4.1" fill="#1e6266"/>
<rect x="491.50" y="309.26" width="4.1" height="4.1" fill="#1e5e65"/>
<rect x="495.12" y="309.26" width="4.1" height="4.1" fill="#1f5664"/>
<rect x="498.74" y="309.26" width="4.1" height="4.1" fill="#1f4e63"/>
<rect x="502.36" y="309.26" width="4.1" height="4.1" fill="#243251"/>
<rect x="375.66" y="312.88" width="4.1" height="4.1" fill="#21425d"/>
<rect x="379.28" y="312.88" width="4.1" height="4.1" fill="#1e5a65"/>
<rect x="382.90" y="312.88" width="4.1" height="4.1" fill="#1e5e65"/>
<rect x="386.52" y="312.88" width="4.1" height="4.1" fill="#1e5a65"/>
<rect x="390.14" y="312.88" width="4.1" height="4.1" fill="#21425d"/>
<rect x="473.40" y="312.88" width="4.1" height="4.1" fill="#243251"/>
<rect x="477.02" y="312.88" width="4.1" height="4.1" fill="#1f5664"/>
<rect x="480.64" y="312.88" width="4.1" height="4.1" fill="#2e8052"/>
<rect x="484.26" y="312.88" width="4.1" height="4.1" fill="#7e904a"/>
<rect x="487.88" y="312.88" width="4.1" height="4.1" fill="#b0905c"/>
<rect x="491.50" y="312.88" width="4.1" height="4.1" fill="#b0905c"/>
<rect x="495.12" y="312.88" width="4.1" height="4.1" fill="#7e904a"/>
<rect x="498.74" y="312.88" width="4.1" height="4.1" fill="#2e8052"/>
<rect x="502.36" y="312.88" width="4.1" height="4.1" fill="#1f5664"/>
<rect x="505.98" y="312.88" width="4.1" height="4.1" fill="#1f4a62"/>
<rect x="321.36" y="316.50" width="4.1" height="4.1" fill="#252d4e"/>
<rect x="324.98" y="316.50" width="4.1" height="4.1" fill="#1e5965"/>
<rect x="328.60" y="316.50" width="4.1" height="4.1" fill="#1f4b62"/>
<rect x="375.66" y="316.50" width="4.1" height="4.1" fill="#1f4e63"/>
<rect x="379.28" y="316.50" width="4.1" height="4.1" fill="#2e8052"/>
<rect x="382.90" y="316.50" width="4.1" height="4.1" fill="#37824f"/>
<rect x="386.52" y="316.50" width="4.1" height="4.1" fill="#2e8052"/>
<rect x="390.14" y="316.50" width="4.1" height="4.1" fill="#1f5263"/>
<rect x="473.40" y="316.50" width="4.1" height="4.1" fill="#21425d"/>
<rect x="477.02" y="316.50" width="4.1" height="4.1" fill="#2e8052"/>
<rect x="480.64" y="316.50" width="4.1" height="4.1" fill="#b89162"/>
<rect x="484.26" y="316.50" width="4.1" height="4.1" fill="#d7c0e9"/>
<rect x="487.88" y="316.50" width="4.1" height="4.1" fill="#ffffff"/>
<rect x="491.50" y="316.50" width="4.1" height="4.1" fill="#ffffff"/>
<rect x="495.12" y="316.50" width="4.1" height="4.1" fill="#cce0f4"/>
<rect x="498.74" y="316.50" width="4.1" height="4.1" fill="#c89173"/>
<rect x="502.36" y="316.50" width="4.1" height="4.1" fill="#2e8052"/>
<rect x="505.98" y="316.50" width="4.1" height="4.1" fill="#1f4e63"/>
<rect x="321.36" y="320.12" width="4.1" height="4.1" fill="#1f6465"/>
<rect x="324.98" y="320.12" width="4.1" height="4.1" fill="#47874a"/>
<rect x="328.60" y="320.12" width="4.1" height="4.1" fill="#2a7956"/>
<rect x="332.22" y="320.12" width="4.1" height="4.1" fill="#252d4e"/>
<rect x="375.66" y="320.12" width="4.1" height="4.1" fill="#1f5263"/>
<rect x="379.28" y="320.12" width="4.1" height="4.1" fill="#7e904a"/>
<rect x="382.90" y="320.12" width="4.1" height="4.1" fill="#bc9166"/>
<rect x="386.52" y="320.12" width="4.1" height="4.1" fill="#48874a"/>
<rect x="390.14" y="320.12" width="4.1" height="4.1" fill="#1f4e63"/>
<rect x="473.40" y="320.12" width="4.1" height="4.1" fill="#1f4a62"/>
<rect x="477.02" y="320.12" width="4.1" height="4.1" fill="#5a8c44"/>
<rect x="480.64" y="320.12" width="4.1" height="4.1" fill="#deaad0"/>
<rect x="484.26" y="320.12" width="4.1" height="4.1" fill="#ffffff"/>
<rect x="487.88" y="320.12" width="4.1" height="4.1" fill="#ffffff"/>
<rect x="491.50" y="320.12" width="4.1" height="4.1" fill="#ffffff"/>
<rect x="495.12" y="320.12" width="4.1" height="4.1" fill="#d8eeee"/>
<rect x="498.74" y="320.12" width="4.1" height="4.1" fill="#7e904a"/>
<rect x="502.36" y="320.12" width="4.1" height="4.1" fill="#1e6266"/>
<rect x="321.36" y="323.74" width="4.1" height="4.1" fill="#1e5f65"/>
<rect x="324.98" y="323.74" width="4.1" height="4.1" fill="#39834e"/>
<rect x="328.60" y="323.74" width="4.1" height="4.1" fill="#27745a"/>
<rect x="332.22" y="323.74" width="4.1" height="4.1" fill="#26294b"/>
<rect x="375.66" y="323.74" width="4.1" height="4.1" fill="#1f4e63"/>
<rect x="379.28" y="323.74" width="4.1" height="4.1" fill="#5a8c44"/>
<rect x="382.90" y="323.74" width="4.1" height="4.1" fill="#b0905c"/>
<rect x="386.52" y="323.74" width="4.1" height="4.1" fill="#2e8052"/>
<rect x="390.14" y="323.74" width="4.1" height="4.1" fill="#243251"/>
<rect x="473.40" y="323.74" width="4.1" height="4.1" fill="#1f4a62"/>
<rect x="477.02" y="323.74" width="4.1" height="4.1" fill="#40854c"/>
<rect x="480.64" y="323.74" width="4.1" height="4.1" fill="#cdddf4"/>
<rect x="484.26" y="323.74" width="4.1" height="4.1" fill="#ffffff"/>
<rect x="487.88" y="323.74" width="4.1" height="4.1" fill="#ffffff"/>
<rect x="491.50" y="323.74" width="4.1" height="4.1" fill="#ffffff"/>
<rect x="495.12" y="323.74" width="4.1" height="4.1" fill="#f8fdfa"/>
<rect x="498.74" y="323.74" width="4.1" height="4.1" fill="#728f48"/>
<rect x="502.36" y="323.74" width="4.1" height="4.1" fill="#1e6266"/>
<rect x="324.98" y="327.36" width="4.1" height="4.1" fill="#1f4b62"/>
<rect x="328.60" y="327.36" width="4.1" height="4.1" fill="#243453"/>
<rect x="375.66" y="327.36" width="4.1" height="4.1" fill="#262a4c"/>
<rect x="379.28" y="327.36" width="4.1" height="4.1" fill="#1f4e63"/>
<rect x="382.90" y="327.36" width="4.1" height="4.1" fill="#1f4e63"/>
<rect x="386.52" y="327.36" width="4.1" height="4.1" fill="#243251"/>
<rect x="473.40" y="327.36" width="4.1" height="4.1" fill="#1f4a62"/>
<rect x="477.02" y="327.36" width="4.1" height="4.1" fill="#37824f"/>
<rect x="480.64" y="327.36" width="4.1" height="4.1" fill="#deaad0"/>
<rect x="484.26" y="327.36" width="4.1" height="4.1" fill="#ffffff"/>
<rect x="487.88" y="327.36" width="4.1" height="4.1" fill="#ffffff"/>
<rect x="491.50" y="327.36" width="4.1" height="4.1" fill="#ffffff"/>
<rect x="495.12" y="327.36" width="4.1" height="4.1" fill="#dff2ef"/>
<rect x="498.74" y="327.36" width="4.1" height="4.1" fill="#728f48"/>
<rect x="502.36" y="327.36" width="4.1" height="4.1" fill="#1e5e65"/>
<rect x="473.40" y="330.98" width="4.1" height="4.1" fill="#1f4e63"/>
<rect x="477.02" y="330.98" width="4.1" height="4.1" fill="#5a8c44"/>
<rect x="480.64" y="330.98" width="4.1" height="4.1" fill="#d08e80"/>
<rect x="484.26" y="330.98" width="4.1" height="4.1" fill="#ffffff"/>
<rect x="487.88" y="330.98" width="4.1" height="4.1" fill="#ffffff"/>
<rect x="491.50" y="330.98" width="4.1" height="4.1" fill="#ffffff"/>
<rect x="495.12" y="330.98" width="4.1" height="4.1" fill="#d2ccf2"/>
<rect x="498.74" y="330.98" width="4.1" height="4.1" fill="#728f48"/>
<rect x="502.36" y="330.98" width="4.1" height="4.1" fill="#1f5664"/>
<rect x="473.40" y="334.60" width="4.1" height="4.1" fill="#21425d"/>
<rect x="477.02" y="334.60" width="4.1" height="4.1" fill="#206664"/>
<rect x="480.64" y="334.60" width="4.1" height="4.1" fill="#8d904e"/>
<rect x="484.26" y="334.60" width="4.1" height="4.1" fill="#d8eeee"/>
<rect x="487.88" y="334.60" width="4.1" height="4.1" fill="#ffffff"/>
<rect x="491.50" y="334.60" width="4.1" height="4.1" fill="#f8fdfa"/>
<rect x="495.12" y="334.60" width="4.1" height="4.1" fill="#cce0f4"/>
<rect x="498.74" y="334.60" width="4.1" height="4.1" fill="#d08e80"/>
<rect x="502.36" y="334.60" width="4.1" height="4.1" fill="#1e6266"/>
<rect x="473.40" y="338.22" width="4.1" height="4.1" fill="#262a4c"/>
<rect x="477.02" y="338.22" width="4.1" height="4.1" fill="#1f4e63"/>
<rect x="480.64" y="338.22" width="4.1" height="4.1" fill="#2e8052"/>
<rect x="484.26" y="338.22" width="4.1" height="4.1" fill="#37824f"/>
<rect x="487.88" y="338.22" width="4.1" height="4.1" fill="#5a8c44"/>
<rect x="491.50" y="338.22" width="4.1" height="4.1" fill="#b0905c"/>
<rect x="495.12" y="338.22" width="4.1" height="4.1" fill="#728f48"/>
<rect x="498.74" y="338.22" width="4.1" height="4.1" fill="#2e8052"/>
<rect x="502.36" y="338.22" width="4.1" height="4.1" fill="#1f4e63"/>
<rect x="477.02" y="341.84" width="4.1" height="4.1" fill="#21425d"/>
<rect x="480.64" y="341.84" width="4.1" height="4.1" fill="#1f4e63"/>
<rect x="484.26" y="341.84" width="4.1" height="4.1" fill="#1e5e65"/>
<rect x="487.88" y="341.84" width="4.1" height="4.1" fill="#246d5f"/>
<rect x="491.50" y="341.84" width="4.1" height="4.1" fill="#1e6266"/>
<rect x="495.12" y="341.84" width="4.1" height="4.1" fill="#1f5263"/>
<rect x="498.74" y="341.84" width="4.1" height="4.1" fill="#1f4e63"/>
<rect x="502.36" y="341.84" width="4.1" height="4.1" fill="#21425d"/>
<rect x="480.64" y="345.46" width="4.1" height="4.1" fill="#21425d"/>
<rect x="484.26" y="345.46" width="4.1" height="4.1" fill="#1f4e63"/>
<rect x="487.88" y="345.46" width="4.1" height="4.1" fill="#21425d"/>
<rect x="491.50" y="345.46" width="4.1" height="4.1" fill="#243251"/>
<rect x="350.32" y="349.08" width="4.1" height="4.1" fill="#1f4e63"/>
<rect x="353.94" y="349.08" width="4.1" height="4.1" fill="#1f5664"/>
<rect x="357.56" y="349.08" width="4.1" height="4.1" fill="#1e6266"/>
<rect x="361.18" y="349.08" width="4.1" height="4.1" fill="#21425d"/>
<rect x="350.32" y="352.70" width="4.1" height="4.1" fill="#1f5664"/>
<rect x="353.94" y="352.70" width="4.1" height="4.1" fill="#2a7957"/>
<rect x="357.56" y="352.70" width="4.1" height="4.1" fill="#246d5f"/>
<rect x="361.18" y="352.70" width="4.1" height="4.1" fill="#1f4a62"/>
<rect x="542.18" y="352.70" width="4.1" height="4.1" fill="#252e4f"/>
<rect x="545.80" y="352.70" width="4.1" height="4.1" fill="#223a57"/>
<rect x="549.42" y="352.70" width="4.1" height="4.1" fill="#233755"/>
<rect x="553.04" y="352.70" width="4.1" height="4.1" fill="#26294b"/>
<rect x="317.74" y="356.32" width="4.1" height="4.1" fill="#1f5464"/>
<rect x="321.36" y="356.32" width="4.1" height="4.1" fill="#246d5e"/>
<rect x="324.98" y="356.32" width="4.1" height="4.1" fill="#1f5464"/>
<rect x="350.32" y="356.32" width="4.1" height="4.1" fill="#1f4e63"/>
<rect x="353.94" y="356.32" width="4.1" height="4.1" fill="#28755a"/>
<rect x="357.56" y="356.32" width="4.1" height="4.1" fill="#1e6266"/>
<rect x="538.56" y="356.32" width="4.1" height="4.1" fill="#20465f"/>
<rect x="542.18" y="356.32" width="4.1" height="4.1" fill="#2c7d54"/>
<rect x="545.80" y="356.32" width="4.1" height="4.1" fill="#b3905f"/>
<rect x="549.42" y="356.32" width="4.1" height="4.1" fill="#969050"/>
<rect x="553.04" y="356.32" width="4.1" height="4.1" fill="#1e5f66"/>
<rect x="317.74" y="359.94" width="4.1" height="4.1" fill="#2d7e53"/>
<rect x="321.36" y="359.94" width="4.1" height="4.1" fill="#768f49"/>
<rect x="324.98" y="359.94" width="4.1" height="4.1" fill="#2d7e53"/>
<rect x="353.94" y="359.94" width="4.1" height="4.1" fill="#21425d"/>
<rect x="393.76" y="359.94" width="4.1" height="4.1" fill="#253050"/>
<rect x="458.92" y="359.94" width="4.1" height="4.1" fill="#1f5063"/>
<rect x="462.54" y="359.94" width="4.1" height="4.1" fill="#1e5a65"/>
<rect x="466.16" y="359.94" width="4.1" height="4.1" fill="#26294b"/>
<rect x="534.94" y="359.94" width="4.1" height="4.1" fill="#21415c"/>
<rect x="538.56" y="359.94" width="4.1" height="4.1" fill="#287559"/>
<rect x="542.18" y="359.94" width="4.1" height="4.1" fill="#ddadd4"/>
<rect x="545.80" y="359.94" width="4.1" height="4.1" fill="#e2f4ef"/>
<rect x="549.42" y="359.94" width="4.1" height="4.1" fill="#d3e8f1"/>
<rect x="553.04" y="359.94" width="4.1" height="4.1" fill="#c79171"/>
<rect x="317.74" y="363.56" width="4.1" height="4.1" fill="#27735b"/>
<rect x="321.36" y="363.56" width="4.1" height="4.1" fill="#528a46"/>
<rect x="324.98" y="363.56" width="4.1" height="4.1" fill="#27735b"/>
<rect x="390.14" y="363.56" width="4.1" height="4.1" fill="#1f5163"/>
<rect x="393.76" y="363.56" width="4.1" height="4.1" fill="#236b60"/>
<rect x="397.38" y="363.56" width="4.1" height="4.1" fill="#1f5163"/>
<rect x="458.92" y="363.56" width="4.1" height="4.1" fill="#1f6464"/>
<rect x="462.54" y="363.56" width="4.1" height="4.1" fill="#256f5d"/>
<rect x="466.16" y="363.56" width="4.1" height="4.1" fill="#20455e"/>
<rect x="531.32" y="363.56" width="4.1" height="4.1" fill="#26294b"/>
<rect x="534.94" y="363.56" width="4.1" height="4.1" fill="#1f5163"/>
<rect x="538.56" y="363.56" width="4.1" height="4.1" fill="#7c904a"/>
<rect x="542.18" y="363.56" width="4.1" height="4.1" fill="#d3e8f1"/>
<rect x="545.80" y="363.56" width="4.1" height="4.1" fill="#ffffff"/>
<rect x="549.42" y="363.56" width="4.1" height="4.1" fill="#ffffff"/>
<rect x="553.04" y="363.56" width="4.1" height="4.1" fill="#ddaed5"/>
<rect x="317.74" y="367.18" width="4.1" height="4.1" fill="#252c4e"/>
<rect x="321.36" y="367.18" width="4.1" height="4.1" fill="#1f4f63"/>
<rect x="324.98" y="367.18" width="4.1" height="4.1" fill="#252c4e"/>
<rect x="390.14" y="367.18" width="4.1" height="4.1" fill="#1f5163"/>
<rect x="393.76" y="367.18" width="4.1" height="4.1" fill="#236b60"/>
<rect x="397.38" y="367.18" width="4.1" height="4.1" fill="#1f5163"/>
<rect x="458.92" y="367.18" width="4.1" height="4.1" fill="#20455e"/>
<rect x="462.54" y="367.18" width="4.1" height="4.1" fill="#1f5063"/>
<rect x="531.32" y="367.18" width="4.1" height="4.1" fill="#252e4f"/>
<rect x="534.94" y="367.18" width="4.1" height="4.1" fill="#1f5564"/>
<rect x="538.56" y="367.18" width="4.1" height="4.1" fill="#598c44"/>
<rect x="542.18" y="367.18" width="4.1" height="4.1" fill="#cedaf3"/>
<rect x="545.80" y="367.18" width="4.1" height="4.1" fill="#ffffff"/>
<rect x="549.42" y="367.18" width="4.1" height="4.1" fill="#f6fcf8"/>
<rect x="553.04" y="367.18" width="4.1" height="4.1" fill="#df99b0"/>
<rect x="393.76" y="370.80" width="4.1" height="4.1" fill="#253050"/>
<rect x="531.32" y="370.80" width="4.1" height="4.1" fill="#262a4c"/>
<rect x="534.94" y="370.80" width="4.1" height="4.1" fill="#1f5263"/>
<rect x="538.56" y="370.80" width="4.1" height="4.1" fill="#7e904a"/>
<rect x="542.18" y="370.80" width="4.1" height="4.1" fill="#d3e8f0"/>
<rect x="545.80" y="370.80" width="4.1" height="4.1" fill="#ffffff"/>
<rect x="549.42" y="370.80" width="4.1" height="4.1" fill="#ffffff"/>
<rect x="553.04" y="370.80" width="4.1" height="4.1" fill="#ddaed6"/>
<rect x="534.94" y="374.42" width="4.1" height="4.1" fill="#20465f"/>
<rect x="538.56" y="374.42" width="4.1" height="4.1" fill="#2f8052"/>
<rect x="542.18" y="374.42" width="4.1" height="4.1" fill="#d3caf0"/>
<rect x="545.80" y="374.42" width="4.1" height="4.1" fill="#f6fcf8"/>
<rect x="549.42" y="374.42" width="4.1" height="4.1" fill="#e2f4ef"/>
<rect x="553.04" y="374.42" width="4.1" height="4.1" fill="#d78e90"/>
<rect x="411.86" y="378.04" width="4.1" height="4.1" fill="#1f4e63"/>
<rect x="415.48" y="378.04" width="4.1" height="4.1" fill="#1f4e63"/>
<rect x="419.10" y="378.04" width="4.1" height="4.1" fill="#1f4e63"/>
<rect x="422.72" y="378.04" width="4.1" height="4.1" fill="#21425d"/>
<rect x="426.34" y="378.04" width="4.1" height="4.1" fill="#262a4c"/>
<rect x="433.58" y="378.04" width="4.1" height="4.1" fill="#262a4c"/>
<rect x="437.20" y="378.04" width="4.1" height="4.1" fill="#262a4c"/>
<rect x="534.94" y="378.04" width="4.1" height="4.1" fill="#262a4c"/>
<rect x="538.56" y="378.04" width="4.1" height="4.1" fill="#1f4e63"/>
<rect x="542.18" y="378.04" width="4.1" height="4.1" fill="#718f48"/>
<rect x="545.80" y="378.04" width="4.1" height="4.1" fill="#d68e8f"/>
<rect x="549.42" y="378.04" width="4.1" height="4.1" fill="#c69170"/>
<rect x="553.04" y="378.04" width="4.1" height="4.1" fill="#27725b"/>
<rect x="317.74" y="381.66" width="4.1" height="4.1" fill="#1e5764"/>
<rect x="321.36" y="381.66" width="4.1" height="4.1" fill="#243151"/>
<rect x="411.86" y="381.66" width="4.1" height="4.1" fill="#2a7957"/>
<rect x="415.48" y="381.66" width="4.1" height="4.1" fill="#2e8052"/>
<rect x="419.10" y="381.66" width="4.1" height="4.1" fill="#246d5f"/>
<rect x="422.72" y="381.66" width="4.1" height="4.1" fill="#1f4e63"/>
<rect x="426.34" y="381.66" width="4.1" height="4.1" fill="#21425d"/>
<rect x="429.96" y="381.66" width="4.1" height="4.1" fill="#243251"/>
<rect x="433.58" y="381.66" width="4.1" height="4.1" fill="#21425d"/>
<rect x="437.20" y="381.66" width="4.1" height="4.1" fill="#1f4a62"/>
<rect x="440.82" y="381.66" width="4.1" height="4.1" fill="#21425d"/>
<rect x="444.44" y="381.66" width="4.1" height="4.1" fill="#243251"/>
<rect x="448.06" y="381.66" width="4.1" height="4.1" fill="#262a4c"/>
<rect x="542.18" y="381.66" width="4.1" height="4.1" fill="#233956"/>
<rect x="545.80" y="381.66" width="4.1" height="4.1" fill="#1f4b62"/>
<rect x="549.42" y="381.66" width="4.1" height="4.1" fill="#1f4861"/>
<rect x="553.04" y="381.66" width="4.1" height="4.1" fill="#213f5a"/>
<rect x="317.74" y="385.28" width="4.1" height="4.1" fill="#de97ac"/>
<rect x="321.36" y="385.28" width="4.1" height="4.1" fill="#c4926c"/>
<rect x="324.98" y="385.28" width="4.1" height="4.1" fill="#236c5f"/>
<rect x="411.86" y="385.28" width="4.1" height="4.1" fill="#2a7957"/>
<rect x="415.48" y="385.28" width="4.1" height="4.1" fill="#7e904a"/>
<rect x="419.10" y="385.28" width="4.1" height="4.1" fill="#2e8052"/>
<rect x="422.72" y="385.28" width="4.1" height="4.1" fill="#1f5664"/>
<rect x="426.34" y="385.28" width="4.1" height="4.1" fill="#1f5664"/>
<rect x="429.96" y="385.28" width="4.1" height="4.1" fill="#1f4e63"/>
<rect x="433.58" y="385.28" width="4.1" height="4.1" fill="#1f5263"/>
<rect x="437.20" y="385.28" width="4.1" height="4.1" fill="#1f5263"/>
<rect x="440.82" y="385.28" width="4.1" height="4.1" fill="#1f5263"/>
<rect x="444.44" y="385.28" width="4.1" height="4.1" fill="#1f4e63"/>
<rect x="448.06" y="385.28" width="4.1" height="4.1" fill="#21425d"/>
<rect x="451.68" y="385.28" width="4.1" height="4.1" fill="#243251"/>
<rect x="549.42" y="385.28" width="4.1" height="4.1" fill="#1f5163"/>
<rect x="553.04" y="385.28" width="4.1" height="4.1" fill="#2e7f52"/>
<rect x="317.74" y="388.90" width="4.1" height="4.1" fill="#e7f6f0"/>
<rect x="321.36" y="388.90" width="4.1" height="4.1" fill="#cdddf4"/>
<rect x="324.98" y="388.90" width="4.1" height="4.1" fill="#c4926c"/>
<rect x="328.60" y="388.90" width="4.1" height="4.1" fill="#243151"/>
<rect x="411.86" y="388.90" width="4.1" height="4.1" fill="#206664"/>
<rect x="415.48" y="388.90" width="4.1" height="4.1" fill="#5a8c44"/>
<rect x="419.10" y="388.90" width="4.1" height="4.1" fill="#2e8052"/>
<rect x="422.72" y="388.90" width="4.1" height="4.1" fill="#2a7957"/>
<rect x="426.34" y="388.90" width="4.1" height="4.1" fill="#2a7957"/>
<rect x="429.96" y="388.90" width="4.1" height="4.1" fill="#2a7957"/>
<rect x="433.58" y="388.90" width="4.1" height="4.1" fill="#246d5f"/>
<rect x="437.20" y="388.90" width="4.1" height="4.1" fill="#5a8c44"/>
<rect x="440.82" y="388.90" width="4.1" height="4.1" fill="#5a8c44"/>
<rect x="444.44" y="388.90" width="4.1" height="4.1" fill="#5a8c44"/>
<rect x="448.06" y="388.90" width="4.1" height="4.1" fill="#2e8052"/>
<rect x="451.68" y="388.90" width="4.1" height="4.1" fill="#1f4e63"/>
<rect x="549.42" y="388.90" width="4.1" height="4.1" fill="#2d7e53"/>
<rect x="553.04" y="388.90" width="4.1" height="4.1" fill="#b2905e"/>
<rect x="317.74" y="392.52" width="4.1" height="4.1" fill="#ffffff"/>
<rect x="321.36" y="392.52" width="4.1" height="4.1" fill="#e7f6f0"/>
<rect x="324.98" y="392.52" width="4.1" height="4.1" fill="#de97ac"/>
<rect x="328.60" y="392.52" width="4.1" height="4.1" fill="#1e5764"/>
<rect x="411.86" y="392.52" width="4.1" height="4.1" fill="#1f4e63"/>
<rect x="415.48" y="392.52" width="4.1" height="4.1" fill="#2e8052"/>
<rect x="419.10" y="392.52" width="4.1" height="4.1" fill="#48874a"/>
<rect x="422.72" y="392.52" width="4.1" height="4.1" fill="#d08e80"/>
<rect x="426.34" y="392.52" width="4.1" height="4.1" fill="#db919e"/>
<rect x="429.96" y="392.52" width="4.1" height="4.1" fill="#d58e8c"/>
<rect x="433.58" y="392.52" width="4.1" height="4.1" fill="#c4926c"/>
<rect x="437.20" y="392.52" width="4.1" height="4.1" fill="#d7c0e9"/>
<rect x="440.82" y="392.52" width="4.1" height="4.1" fill="#dff2ef"/>
<rect x="444.44" y="392.52" width="4.1" height="4.1" fill="#d0d2f3"/>
<rect x="448.06" y="392.52" width="4.1" height="4.1" fill="#b89162"/>
<rect x="451.68" y="392.52" width="4.1" height="4.1" fill="#2e8052"/>
<rect x="455.30" y="392.52" width="4.1" height="4.1" fill="#1f4a62"/>
<rect x="549.42" y="392.52" width="4.1" height="4.1" fill="#2d7e53"/>
<rect x="553.04" y="392.52" width="4.1" height="4.1" fill="#b2905e"/>
<rect x="317.74" y="396.14" width="4.1" height="4.1" fill="#f4fbf7"/>
<rect x="321.36" y="396.14" width="4.1" height="4.1" fill="#d2e7f1"/>
<rect x="324.98" y="396.14" width="4.1" height="4.1" fill="#d18e82"/>
<rect x="328.60" y="396.14" width="4.1" height="4.1" fill="#21405b"/>
<rect x="411.86" y="396.14" width="4.1" height="4.1" fill="#1f4a62"/>
<rect x="415.48" y="396.14" width="4.1" height="4.1" fill="#2e8052"/>
<rect x="419.10" y="396.14" width="4.1" height="4.1" fill="#de96ab"/>
<rect x="422.72" y="396.14" width="4.1" height="4.1" fill="#ffffff"/>
<rect x="426.34" y="396.14" width="4.1" height="4.1" fill="#ffffff"/>
<rect x="429.96" y="396.14" width="4.1" height="4.1" fill="#f2fbf6"/>
<rect x="433.58" y="396.14" width="4.1" height="4.1" fill="#d1e6f2"/>
<rect x="437.20" y="396.14" width="4.1" height="4.1" fill="#ffffff"/>
<rect x="440.82" y="396.14" width="4.1" height="4.1" fill="#ffffff"/>
<rect x="444.44" y="396.14" width="4.1" height="4.1" fill="#ffffff"/>
<rect x="448.06" y="396.14" width="4.1" height="4.1" fill="#d1e6f2"/>
<rect x="451.68" y="396.14" width="4.1" height="4.1" fill="#7e904a"/>
<rect x="455.30" y="396.14" width="4.1" height="4.1" fill="#1f4e63"/>
<rect x="549.42" y="396.14" width="4.1" height="4.1" fill="#1f4a62"/>
<rect x="553.04" y="396.14" width="4.1" height="4.1" fill="#2d7e53"/>
<rect x="317.74" y="399.76" width="4.1" height="4.1" fill="#dcb3de"/>
<rect x="321.36" y="399.76" width="4.1" height="4.1" fill="#d98e96"/>
<rect x="324.98" y="399.76" width="4.1" height="4.1" fill="#338151"/>
<rect x="411.86" y="399.76" width="4.1" height="4.1" fill="#21425d"/>
<rect x="415.48" y="399.76" width="4.1" height="4.1" fill="#2e8052"/>
<rect x="419.10" y="399.76" width="4.1" height="4.1" fill="#f2fbf6"/>
<rect x="422.72" y="399.76" width="4.1" height="4.1" fill="#ffffff"/>
<rect x="426.34" y="399.76" width="4.1" height="4.1" fill="#ffffff"/>
<rect x="429.96" y="399.76" width="4.1" height="4.1" fill="#ffffff"/>
<rect x="433.58" y="399.76" width="4.1" height="4.1" fill="#ffffff"/>
<rect x="437.20" y="399.76" width="4.1" height="4.1" fill="#ffffff"/>
<rect x="440.82" y="399.76" width="4.1" height="4.1" fill="#ffffff"/>
<rect x="444.44" y="399.76" width="4.1" height="4.1" fill="#ffffff"/>
<rect x="448.06" y="399.76" width="4.1" height="4.1" fill="#dff2ef"/>
<rect x="451.68" y="399.76" width="4.1" height="4.1" fill="#7e904a"/>
<rect x="455.30" y="399.76" width="4.1" height="4.1" fill="#1f4e63"/>
<rect x="317.74" y="403.38" width="4.1" height="4.1" fill="#297758"/>
<rect x="321.36" y="403.38" width="4.1" height="4.1" fill="#1e5764"/>
<rect x="411.86" y="403.38" width="4.1" height="4.1" fill="#21425d"/>
<rect x="415.48" y="403.38" width="4.1" height="4.1" fill="#2e8052"/>
<rect x="419.10" y="403.38" width="4.1" height="4.1" fill="#ffffff"/>
<rect x="422.72" y="403.38" width="4.1" height="4.1" fill="#ffffff"/>
<rect x="426.34" y="403.38" width="4.1" height="4.1" fill="#ffffff"/>
<rect x="429.96" y="403.38" width="4.1" height="4.1" fill="#ffffff"/>
<rect x="433.58" y="403.38" width="4.1" height="4.1" fill="#ffffff"/>
<rect x="437.20" y="403.38" width="4.1" height="4.1" fill="#ffffff"/>
<rect x="440.82" y="403.38" width="4.1" height="4.1" fill="#ffffff"/>
<rect x="444.44" y="403.38" width="4.1" height="4.1" fill="#ffffff"/>
<rect x="448.06" y="403.38" width="4.1" height="4.1" fill="#d1e6f2"/>
<rect x="451.68" y="403.38" width="4.1" height="4.1" fill="#37824f"/>
<rect x="455.30" y="403.38" width="4.1" height="4.1" fill="#1f4a62"/>
<rect x="411.86" y="407.00" width="4.1" height="4.1" fill="#243251"/>
<rect x="415.48" y="407.00" width="4.1" height="4.1" fill="#246d5f"/>
<rect x="419.10" y="407.00" width="4.1" height="4.1" fill="#f2fbf6"/>
<rect x="422.72" y="407.00" width="4.1" height="4.1" fill="#ffffff"/>
<rect x="426.34" y="407.00" width="4.1" height="4.1" fill="#ffffff"/>
<rect x="429.96" y="407.00" width="4.1" height="4.1" fill="#ffffff"/>
<rect x="433.58" y="407.00" width="4.1" height="4.1" fill="#cce0f4"/>
<rect x="437.20" y="407.00" width="4.1" height="4.1" fill="#ffffff"/>
<rect x="440.82" y="407.00" width="4.1" height="4.1" fill="#ffffff"/>
<rect x="444.44" y="407.00" width="4.1" height="4.1" fill="#ffffff"/>
<rect x="448.06" y="407.00" width="4.1" height="4.1" fill="#de96ab"/>
<rect x="451.68" y="407.00" width="4.1" height="4.1" fill="#2e8052"/>
<rect x="455.30" y="407.00" width="4.1" height="4.1" fill="#21425d"/>
<rect x="415.48" y="410.62" width="4.1" height="4.1" fill="#1f5664"/>
<rect x="419.10" y="410.62" width="4.1" height="4.1" fill="#de96ab"/>
<rect x="422.72" y="410.62" width="4.1" height="4.1" fill="#ffffff"/>
<rect x="426.34" y="410.62" width="4.1" height="4.1" fill="#ffffff"/>
<rect x="429.96" y="410.62" width="4.1" height="4.1" fill="#d0d2f3"/>
<rect x="433.58" y="410.62" width="4.1" height="4.1" fill="#c89173"/>
<rect x="437.20" y="410.62" width="4.1" height="4.1" fill="#9c9052"/>
<rect x="440.82" y="410.62" width="4.1" height="4.1" fill="#7e904a"/>
<rect x="444.44" y="410.62" width="4.1" height="4.1" fill="#2e8052"/>
<rect x="448.06" y="410.62" width="4.1" height="4.1" fill="#2e8052"/>
<rect x="451.68" y="410.62" width="4.1" height="4.1" fill="#206664"/>
<rect x="469.78" y="410.62" width="4.1" height="4.1" fill="#243352"/>
<rect x="473.40" y="410.62" width="4.1" height="4.1" fill="#1f5364"/>
<rect x="477.02" y="410.62" width="4.1" height="4.1" fill="#243352"/>
<rect x="415.48" y="414.24" width="4.1" height="4.1" fill="#1f4e63"/>
<rect x="419.10" y="414.24" width="4.1" height="4.1" fill="#1e6266"/>
<rect x="422.72" y="414.24" width="4.1" height="4.1" fill="#2a7957"/>
<rect x="426.34" y="414.24" width="4.1" height="4.1" fill="#2a7957"/>
<rect x="429.96" y="414.24" width="4.1" height="4.1" fill="#48874a"/>
<rect x="433.58" y="414.24" width="4.1" height="4.1" fill="#2e8052"/>
<rect x="437.20" y="414.24" width="4.1" height="4.1" fill="#246d5f"/>
<rect x="440.82" y="414.24" width="4.1" height="4.1" fill="#1f4e63"/>
<rect x="444.44" y="414.24" width="4.1" height="4.1" fill="#243251"/>
<rect x="469.78" y="414.24" width="4.1" height="4.1" fill="#1f4a62"/>
<rect x="473.40" y="414.24" width="4.1" height="4.1" fill="#1e6365"/>
<rect x="477.02" y="414.24" width="4.1" height="4.1" fill="#1f4a62"/>
<rect x="415.48" y="417.86" width="4.1" height="4.1" fill="#1f4a62"/>
<rect x="419.10" y="417.86" width="4.1" height="4.1" fill="#1f5664"/>
<rect x="422.72" y="417.86" width="4.1" height="4.1" fill="#2e8052"/>
<rect x="426.34" y="417.86" width="4.1" height="4.1" fill="#b0905c"/>
<rect x="429.96" y="417.86" width="4.1" height="4.1" fill="#b0905c"/>
<rect x="433.58" y="417.86" width="4.1" height="4.1" fill="#48874a"/>
<rect x="437.20" y="417.86" width="4.1" height="4.1" fill="#2e8052"/>
<rect x="440.82" y="417.86" width="4.1" height="4.1" fill="#1f5664"/>
<rect x="444.44" y="417.86" width="4.1" height="4.1" fill="#262a4c"/>
<rect x="473.40" y="417.86" width="4.1" height="4.1" fill="#223a57"/>
<rect x="321.36" y="421.48" width="4.1" height="4.1" fill="#1e5664"/>
<rect x="324.98" y="421.48" width="4.1" height="4.1" fill="#1e5664"/>
<rect x="415.48" y="421.48" width="4.1" height="4.1" fill="#21425d"/>
<rect x="419.10" y="421.48" width="4.1" height="4.1" fill="#1e6266"/>
<rect x="422.72" y="421.48" width="4.1" height="4.1" fill="#b0905c"/>
<rect x="426.34" y="421.48" width="4.1" height="4.1" fill="#cce0f4"/>
<rect x="429.96" y="421.48" width="4.1" height="4.1" fill="#e6f6f0"/>
<rect x="433.58" y="421.48" width="4.1" height="4.1" fill="#d0d2f3"/>
<rect x="437.20" y="421.48" width="4.1" height="4.1" fill="#b0905c"/>
<rect x="440.82" y="421.48" width="4.1" height="4.1" fill="#2e8052"/>
<rect x="444.44" y="421.48" width="4.1" height="4.1" fill="#21425d"/>
<rect x="317.74" y="425.10" width="4.1" height="4.1" fill="#1f4d62"/>
<rect x="321.36" y="425.10" width="4.1" height="4.1" fill="#308151"/>
<rect x="324.98" y="425.10" width="4.1" height="4.1" fill="#308151"/>
<rect x="328.60" y="425.10" width="4.1" height="4.1" fill="#1f4d62"/>
<rect x="415.48" y="425.10" width="4.1" height="4.1" fill="#21425d"/>
<rect x="419.10" y="425.10" width="4.1" height="4.1" fill="#1e6266"/>
<rect x="422.72" y="425.10" width="4.1" height="4.1" fill="#d7c0e9"/>
<rect x="426.34" y="425.10" width="4.1" height="4.1" fill="#ffffff"/>
<rect x="429.96" y="425.10" width="4.1" height="4.1" fill="#ffffff"/>
<rect x="433.58" y="425.10" width="4.1" height="4.1" fill="#ffffff"/>
<rect x="437.20" y="425.10" width="4.1" height="4.1" fill="#d7c0e9"/>
<rect x="440.82" y="425.10" width="4.1" height="4.1" fill="#2e8052"/>
<rect x="444.44" y="425.10" width="4.1" height="4.1" fill="#21425d"/>
<rect x="317.74" y="428.72" width="4.1" height="4.1" fill="#223e5a"/>
<rect x="321.36" y="428.72" width="4.1" height="4.1" fill="#287659"/>
<rect x="324.98" y="428.72" width="4.1" height="4.1" fill="#287659"/>
<rect x="328.60" y="428.72" width="4.1" height="4.1" fill="#223e5a"/>
<rect x="415.48" y="428.72" width="4.1" height="4.1" fill="#1f4a62"/>
<rect x="419.10" y="428.72" width="4.1" height="4.1" fill="#1e5e65"/>
<rect x="422.72" y="428.72" width="4.1" height="4.1" fill="#cce0f4"/>
<rect x="426.34" y="428.72" width="4.1" height="4.1" fill="#ffffff"/>
<rect x="429.96" y="428.72" width="4.1" height="4.1" fill="#ffffff"/>
<rect x="433.58" y="428.72" width="4.1" height="4.1" fill="#ffffff"/>
<rect x="437.20" y="428.72" width="4.1" height="4.1" fill="#d7c0e9"/>
<rect x="440.82" y="428.72" width="4.1" height="4.1" fill="#2a7957"/>
<rect x="444.44" y="428.72" width="4.1" height="4.1" fill="#21425d"/>
<rect x="321.36" y="432.34" width="4.1" height="4.1" fill="#253050"/>
<rect x="324.98" y="432.34" width="4.1" height="4.1" fill="#253050"/>
<rect x="415.48" y="432.34" width="4.1" height="4.1" fill="#243251"/>
<rect x="419.10" y="432.34" width="4.1" height="4.1" fill="#1f5664"/>
<rect x="422.72" y="432.34" width="4.1" height="4.1" fill="#d0d2f3"/>
<rect x="426.34" y="432.34" width="4.1" height="4.1" fill="#ffffff"/>
<rect x="429.96" y="432.34" width="4.1" height="4.1" fill="#ffffff"/>
<rect x="433.58" y="432.34" width="4.1" height="4.1" fill="#ffffff"/>
<rect x="437.20" y="432.34" width="4.1" height="4.1" fill="#db919e"/>
<rect x="440.82" y="432.34" width="4.1" height="4.1" fill="#246d5f"/>
<rect x="444.44" y="432.34" width="4.1" height="4.1" fill="#21425d"/>
<rect x="415.48" y="435.96" width="4.1" height="4.1" fill="#243251"/>
<rect x="419.10" y="435.96" width="4.1" height="4.1" fill="#1f5664"/>
<rect x="422.72" y="435.96" width="4.1" height="4.1" fill="#c4926c"/>
<rect x="426.34" y="435.96" width="4.1" height="4.1" fill="#d8eeee"/>
<rect x="429.96" y="435.96" width="4.1" height="4.1" fill="#dff2ef"/>
<rect x="433.58" y="435.96" width="4.1" height="4.1" fill="#dcb4e0"/>
<rect x="437.20" y="435.96" width="4.1" height="4.1" fill="#7e904a"/>
<rect x="440.82" y="435.96" width="4.1" height="4.1" fill="#1f5664"/>
<rect x="444.44" y="435.96" width="4.1" height="4.1" fill="#262a4c"/>
<rect x="332.22" y="439.58" width="4.1" height="4.1" fill="#253050"/>
<rect x="335.84" y="439.58" width="4.1" height="4.1" fill="#204760"/>
<rect x="419.10" y="439.58" width="4.1" height="4.1" fill="#21425d"/>
<rect x="422.72" y="439.58" width="4.1" height="4.1" fill="#1f4e63"/>
<rect x="426.34" y="439.58" width="4.1" height="4.1" fill="#1f4e63"/>
<rect x="429.96" y="439.58" width="4.1" height="4.1" fill="#1e5e65"/>
<rect x="433.58" y="439.58" width="4.1" height="4.1" fill="#1f5664"/>
<rect x="437.20" y="439.58" width="4.1" height="4.1" fill="#1f4e63"/>
<rect x="440.82" y="439.58" width="4.1" height="4.1" fill="#243251"/>
<rect x="332.22" y="443.20" width="4.1" height="4.1" fill="#236b60"/>
<rect x="335.84" y="443.20" width="4.1" height="4.1" fill="#2c7c55"/>
<rect x="339.46" y="443.20" width="4.1" height="4.1" fill="#1e5664"/>
<rect x="422.72" y="443.20" width="4.1" height="4.1" fill="#262a4c"/>
<rect x="426.34" y="443.20" width="4.1" height="4.1" fill="#262a4c"/>
<rect x="429.96" y="443.20" width="4.1" height="4.1" fill="#262a4c"/>
<rect x="433.58" y="443.20" width="4.1" height="4.1" fill="#262a4c"/>
<rect x="332.22" y="446.82" width="4.1" height="4.1" fill="#236b60"/>
<rect x="335.84" y="446.82" width="4.1" height="4.1" fill="#2c7c55"/>
<rect x="339.46" y="446.82" width="4.1" height="4.1" fill="#1e5664"/>
<rect x="332.22" y="450.44" width="4.1" height="4.1" fill="#253050"/>
<rect x="335.84" y="450.44" width="4.1" height="4.1" fill="#204760"/>
<rect x="505.98" y="450.44" width="4.1" height="4.1" fill="#1f4e63"/>
<rect x="509.60" y="450.44" width="4.1" height="4.1" fill="#1f5664"/>
<rect x="513.22" y="450.44" width="4.1" height="4.1" fill="#21425d"/>
<rect x="502.36" y="454.06" width="4.1" height="4.1" fill="#243251"/>
<rect x="505.98" y="454.06" width="4.1" height="4.1" fill="#206664"/>
<rect x="509.60" y="454.06" width="4.1" height="4.1" fill="#246d5f"/>
<rect x="513.22" y="454.06" width="4.1" height="4.1" fill="#1e5a65"/>
<rect x="516.84" y="454.06" width="4.1" height="4.1" fill="#262a4c"/>
<rect x="502.36" y="457.68" width="4.1" height="4.1" fill="#1f5664"/>
<rect x="505.98" y="457.68" width="4.1" height="4.1" fill="#37824f"/>
<rect x="509.60" y="457.68" width="4.1" height="4.1" fill="#5a8c44"/>
<rect x="513.22" y="457.68" width="4.1" height="4.1" fill="#2e8052"/>
<rect x="516.84" y="457.68" width="4.1" height="4.1" fill="#243251"/>
<rect x="502.36" y="461.30" width="4.1" height="4.1" fill="#262a4c"/>
<rect x="505.98" y="461.30" width="4.1" height="4.1" fill="#728f48"/>
<rect x="509.60" y="461.30" width="4.1" height="4.1" fill="#b89162"/>
<rect x="513.22" y="461.30" width="4.1" height="4.1" fill="#48874a"/>
<rect x="516.84" y="461.30" width="4.1" height="4.1" fill="#21425d"/>
<rect x="361.18" y="464.92" width="4.1" height="4.1" fill="#1f4e63"/>
<rect x="364.80" y="464.92" width="4.1" height="4.1" fill="#21425d"/>
<rect x="368.42" y="464.92" width="4.1" height="4.1" fill="#21425d"/>
<rect x="505.98" y="464.92" width="4.1" height="4.1" fill="#37824f"/>
<rect x="509.60" y="464.92" width="4.1" height="4.1" fill="#5a8c44"/>
<rect x="513.22" y="464.92" width="4.1" height="4.1" fill="#2e8052"/>
<rect x="361.18" y="468.54" width="4.1" height="4.1" fill="#21425d"/>
<rect x="364.80" y="468.54" width="4.1" height="4.1" fill="#1e6266"/>
<rect x="368.42" y="468.54" width="4.1" height="4.1" fill="#1e5e65"/>
<rect x="372.04" y="468.54" width="4.1" height="4.1" fill="#262a4c"/>
<rect x="509.60" y="468.54" width="4.1" height="4.1" fill="#21425d"/>
<rect x="361.18" y="472.16" width="4.1" height="4.1" fill="#1e5e65"/>
<rect x="364.80" y="472.16" width="4.1" height="4.1" fill="#2e8052"/>
<rect x="368.42" y="472.16" width="4.1" height="4.1" fill="#2a7957"/>
<rect x="372.04" y="472.16" width="4.1" height="4.1" fill="#1f5664"/>
<rect x="361.18" y="475.78" width="4.1" height="4.1" fill="#1f5664"/>
<rect x="364.80" y="475.78" width="4.1" height="4.1" fill="#2e8052"/>
<rect x="368.42" y="475.78" width="4.1" height="4.1" fill="#2a7957"/>
<rect x="372.04" y="475.78" width="4.1" height="4.1" fill="#1f4a62"/>
<rect x="364.80" y="479.40" width="4.1" height="4.1" fill="#21425d"/>
<rect x="368.42" y="479.40" width="4.1" height="4.1" fill="#243251"/>
<rect x="353.94" y="490.26" width="4.1" height="4.1" fill="#1f4e63"/>
<rect x="357.56" y="490.26" width="4.1" height="4.1" fill="#2e8052"/>
<rect x="361.18" y="490.26" width="4.1" height="4.1" fill="#2e8052"/>
<rect x="364.80" y="490.26" width="4.1" height="4.1" fill="#1f4e63"/>
<rect x="553.04" y="490.26" width="4.1" height="4.1" fill="#1f4d62"/>
<rect x="353.94" y="493.88" width="4.1" height="4.1" fill="#2e8052"/>
<rect x="357.56" y="493.88" width="4.1" height="4.1" fill="#b0905c"/>
<rect x="361.18" y="493.88" width="4.1" height="4.1" fill="#b0905c"/>
<rect x="364.80" y="493.88" width="4.1" height="4.1" fill="#2e8052"/>
<rect x="368.42" y="493.88" width="4.1" height="4.1" fill="#21425d"/>
<rect x="549.42" y="493.88" width="4.1" height="4.1" fill="#318151"/>
<rect x="553.04" y="493.88" width="4.1" height="4.1" fill="#a39056"/>
<rect x="353.94" y="497.50" width="4.1" height="4.1" fill="#5a8c44"/>
<rect x="357.56" y="497.50" width="4.1" height="4.1" fill="#da8e98"/>
<rect x="361.18" y="497.50" width="4.1" height="4.1" fill="#d58e8c"/>
<rect x="364.80" y="497.50" width="4.1" height="4.1" fill="#5a8c44"/>
<rect x="368.42" y="497.50" width="4.1" height="4.1" fill="#21425d"/>
<rect x="545.80" y="497.50" width="4.1" height="4.1" fill="#1f4d62"/>
<rect x="549.42" y="497.50" width="4.1" height="4.1" fill="#a39056"/>
<rect x="553.04" y="497.50" width="4.1" height="4.1" fill="#d98e95"/>
<rect x="353.94" y="501.12" width="4.1" height="4.1" fill="#37824f"/>
<rect x="357.56" y="501.12" width="4.1" height="4.1" fill="#d58e8c"/>
<rect x="361.18" y="501.12" width="4.1" height="4.1" fill="#d58e8c"/>
<rect x="364.80" y="501.12" width="4.1" height="4.1" fill="#2e8052"/>
<rect x="368.42" y="501.12" width="4.1" height="4.1" fill="#21425d"/>
<rect x="545.80" y="501.12" width="4.1" height="4.1" fill="#213f5a"/>
<rect x="549.42" y="501.12" width="4.1" height="4.1" fill="#8c904e"/>
<rect x="553.04" y="501.12" width="4.1" height="4.1" fill="#d08e80"/>
<rect x="317.74" y="504.74" width="4.1" height="4.1" fill="#1e5a65"/>
<rect x="321.36" y="504.74" width="4.1" height="4.1" fill="#1f5063"/>
<rect x="353.94" y="504.74" width="4.1" height="4.1" fill="#21425d"/>
<rect x="357.56" y="504.74" width="4.1" height="4.1" fill="#2a7957"/>
<rect x="361.18" y="504.74" width="4.1" height="4.1" fill="#206664"/>
<rect x="364.80" y="504.74" width="4.1" height="4.1" fill="#1f4e63"/>
<rect x="549.42" y="504.74" width="4.1" height="4.1" fill="#1e6166"/>
<rect x="553.04" y="504.74" width="4.1" height="4.1" fill="#4c8848"/>
<rect x="317.74" y="508.36" width="4.1" height="4.1" fill="#256f5d"/>
<rect x="321.36" y="508.36" width="4.1" height="4.1" fill="#1f6464"/>
<rect x="317.74" y="511.98" width="4.1" height="4.1" fill="#1f5063"/>
<rect x="321.36" y="511.98" width="4.1" height="4.1" fill="#20455e"/>
<rect x="444.44" y="515.60" width="4.1" height="4.1" fill="#262a4c"/>
<rect x="448.06" y="515.60" width="4.1" height="4.1" fill="#262a4c"/>
<rect x="328.60" y="519.22" width="4.1" height="4.1" fill="#1e5a65"/>
<rect x="332.22" y="519.22" width="4.1" height="4.1" fill="#226961"/>
<rect x="335.84" y="519.22" width="4.1" height="4.1" fill="#20445e"/>
<rect x="440.82" y="519.22" width="4.1" height="4.1" fill="#21405b"/>
<rect x="444.44" y="519.22" width="4.1" height="4.1" fill="#297758"/>
<rect x="448.06" y="519.22" width="4.1" height="4.1" fill="#297758"/>
<rect x="451.68" y="519.22" width="4.1" height="4.1" fill="#21405b"/>
</g>
<path d="M314.12,283.2V520.9M317.74,283.2V520.9M321.36,283.2V520.9M324.98,283.2V520.9M328.60,283.2V520.9M332.22,283.2V520.9M335.84,283.2V520.9M339.46,283.2V520.9M343.08,283.2V520.9M346.70,283.2V520.9M350.32,283.2V520.9M353.94,283.2V520.9M357.56,283.2V520.9M361.18,283.2V520.9M364.80,283.2V520.9M368.42,283.2V520.9M372.04,283.2V520.9M375.66,283.2V520.9M379.28,283.2V520.9M382.90,283.2V520.9M386.52,283.2V520.9M390.14,283.2V520.9M393.76,283.2V520.9M397.38,283.2V520.9M401.00,283.2V520.9M404.62,283.2V520.9M408.24,283.2V520.9M411.86,283.2V520.9M415.48,283.2V520.9M419.10,283.2V520.9M422.72,283.2V520.9M426.34,283.2V520.9M429.96,283.2V520.9M433.58,283.2V520.9M437.20,283.2V520.9M440.82,283.2V520.9M444.44,283.2V520.9M448.06,283.2V520.9M451.68,283.2V520.9M455.30,283.2V520.9M458.92,283.2V520.9M462.54,283.2V520.9M466.16,283.2V520.9M469.78,283.2V520.9M473.40,283.2V520.9M477.02,283.2V520.9M480.64,283.2V520.9M484.26,283.2V520.9M487.88,283.2V520.9M491.50,283.2V520.9M495.12,283.2V520.9M498.74,283.2V520.9M502.36,283.2V520.9M505.98,283.2V520.9M509.60,283.2V520.9M513.22,283.2V520.9M516.84,283.2V520.9M520.46,283.2V520.9M524.08,283.2V520.9M527.70,283.2V520.9M531.32,283.2V520.9M534.94,283.2V520.9M538.56,283.2V520.9M542.18,283.2V520.9M545.80,283.2V520.9M549.42,283.2V520.9M553.04,283.2V520.9M556.66,283.2V520.9M317.1,280.30H554.4M317.1,283.92H554.4M317.1,287.54H554.4M317.1,291.16H554.4M317.1,294.78H554.4M317.1,298.40H554.4M317.1,302.02H554.4M317.1,305.64H554.4M317.1,309.26H554.4M317.1,312.88H554.4M317.1,316.50H554.4M317.1,320.12H554.4M317.1,323.74H554.4M317.1,327.36H554.4M317.1,330.98H554.4M317.1,334.60H554.4M317.1,338.22H554.4M317.1,341.84H554.4M317.1,345.46H554.4M317.1,349.08H554.4M317.1,352.70H554.4M317.1,356.32H554.4M317.1,359.94H554.4M317.1,363.56H554.4M317.1,367.18H554.4M317.1,370.80H554.4M317.1,374.42H554.4M317.1,378.04H554.4M317.1,381.66H554.4M317.1,385.28H554.4M317.1,388.90H554.4M317.1,392.52H554.4M317.1,396.14H554.4M317.1,399.76H554.4M317.1,403.38H554.4M317.1,407.00H554.4M317.1,410.62H554.4M317.1,414.24H554.4M317.1,417.86H554.4M317.1,421.48H554.4M317.1,425.10H554.4M317.1,428.72H554.4M317.1,432.34H554.4M317.1,435.96H554.4M317.1,439.58H554.4M317.1,443.20H554.4M317.1,446.82H554.4M317.1,450.44H554.4M317.1,454.06H554.4M317.1,457.68H554.4M317.1,461.30H554.4M317.1,464.92H554.4M317.1,468.54H554.4M317.1,472.16H554.4M317.1,475.78H554.4M317.1,479.40H554.4M317.1,483.02H554.4M317.1,486.64H554.4M317.1,490.26H554.4M317.1,493.88H554.4M317.1,497.50H554.4M317.1,501.12H554.4M317.1,504.74H554.4M317.1,508.36H554.4M317.1,511.98H554.4M317.1,515.60H554.4M317.1,519.22H554.4M317.1,522.84H554.4" stroke="#4e4872" stroke-width="0.55" fill="none" style="mix-blend-mode:lighten"/>
<line x1="317.1" y1="401.9" x2="554.4" y2="401.9" stroke="#20c8d8" stroke-width="1"/>
<line x1="435.5" y1="283.2" x2="435.5" y2="520.9" stroke="#f0b0a8" stroke-width="1"/>
</svg>
<rect x="322.4" y="529.0" width="68.6" height="14.0" rx="3" fill="url(#bg)" stroke="#a9a9a9" stroke-width="1"/>
<line x1="323.9" y1="543.8" x2="389.5" y2="543.8" stroke="#d2d2d2" stroke-width="0.8"/>
<text x="347.0" y="539.6" font-size="9.6" fill="#141414" stroke="#141414" stroke-width="0.3" font-weight="normal" text-anchor="start" textLength="19.4" lengthAdjust="spacingAndGlyphs">Blink</text>
<rect x="400.9" y="529.0" width="69.2" height="14.0" rx="3" fill="url(#bg)" stroke="#a9a9a9" stroke-width="1"/>
<line x1="402.4" y1="543.8" x2="468.6" y2="543.8" stroke="#d2d2d2" stroke-width="0.8"/>
<text x="415.1" y="539.6" font-size="9.6" fill="#141414" stroke="#141414" stroke-width="0.3" font-weight="normal" text-anchor="start" textLength="40.8" lengthAdjust="spacingAndGlyphs">Refresh 1</text>
<rect x="480.5" y="529.0" width="68.4" height="14.0" rx="3" fill="url(#bg)" stroke="#a9a9a9" stroke-width="1"/>
<line x1="482.0" y1="543.8" x2="547.4" y2="543.8" stroke="#d2d2d2" stroke-width="0.8"/>
<text x="494.3" y="539.6" font-size="9.6" fill="#f2a23a" stroke="#f2a23a" stroke-width="0.3" font-weight="normal" text-anchor="start" textLength="40.8" lengthAdjust="spacingAndGlyphs">Refresh 2</text>
<rect x="322.4" y="551.9" width="68.6" height="14.3" rx="3" fill="url(#bg)" stroke="#a9a9a9" stroke-width="1"/>
<line x1="323.9" y1="567.0" x2="389.5" y2="567.0" stroke="#d2d2d2" stroke-width="0.8"/>
<text x="333.8" y="562.6" font-size="9.6" fill="#141414" stroke="#141414" stroke-width="0.3" font-weight="normal" text-anchor="start" textLength="45.9" lengthAdjust="spacingAndGlyphs">Source List</text>
<rect x="400.9" y="551.9" width="69.2" height="14.3" rx="3" fill="url(#bg)" stroke="#a9a9a9" stroke-width="1"/>
<line x1="402.4" y1="567.0" x2="468.6" y2="567.0" stroke="#d2d2d2" stroke-width="0.8"/>
<text x="416.9" y="562.6" font-size="9.6" fill="#141414" stroke="#141414" stroke-width="0.3" font-weight="normal" text-anchor="start" textLength="37.2" lengthAdjust="spacingAndGlyphs">Pick/Zap</text>
<rect x="480.5" y="551.9" width="68.4" height="14.3" rx="3" fill="url(#bg)" stroke="#a9a9a9" stroke-width="1"/>
<line x1="482.0" y1="567.0" x2="547.4" y2="567.0" stroke="#d2d2d2" stroke-width="0.8"/>
<text x="491.5" y="562.6" font-size="9.6" fill="#141414" stroke="#141414" stroke-width="0.3" font-weight="normal" text-anchor="start" textLength="46.4" lengthAdjust="spacingAndGlyphs">Screenshot</text>
<rect x="570.7" y="20.2" width="445.8" height="495.8" fill="#ffffff" stroke="#bdbdbd" stroke-width="1"/>
<svg x="571.2" y="20.7" width="432.80" height="484.30" viewBox="571.2 20.7 432.80 484.30" overflow="hidden">
<rect x="571.2" y="20.7" width="432.80" height="484.30" fill="#1e1a34"/>
<filter id="softb" x="-2%" y="-2%" width="104%" height="104%"><feGaussianBlur stdDeviation="0.55"/></filter><g filter="url(#softb)">
<rect x="772.70" y="18.15" width="8.2" height="8.2" fill="#358250"/>
<rect x="780.10" y="18.15" width="8.2" height="8.2" fill="#ba9164"/>
<rect x="787.50" y="18.15" width="8.2" height="8.2" fill="#b2905e"/>
<rect x="794.90" y="18.15" width="8.2" height="8.2" fill="#25705d"/>
<rect x="839.30" y="18.15" width="8.2" height="8.2" fill="#1e5864"/>
<rect x="846.70" y="18.15" width="8.2" height="8.2" fill="#216862"/>
<rect x="854.10" y="18.15" width="8.2" height="8.2" fill="#21425d"/>
<rect x="609.90" y="25.55" width="8.2" height="8.2" fill="#262a4c"/>
<rect x="617.30" y="25.55" width="8.2" height="8.2" fill="#262a4c"/>
<rect x="772.70" y="25.55" width="8.2" height="8.2" fill="#1f6465"/>
<rect x="780.10" y="25.55" width="8.2" height="8.2" fill="#7e904a"/>
<rect x="787.50" y="25.55" width="8.2" height="8.2" fill="#698e46"/>
<rect x="794.90" y="25.55" width="8.2" height="8.2" fill="#1f5363"/>
<rect x="831.90" y="25.55" width="8.2" height="8.2" fill="#262c4d"/>
<rect x="839.30" y="25.55" width="8.2" height="8.2" fill="#2a7857"/>
<rect x="846.70" y="25.55" width="8.2" height="8.2" fill="#44864b"/>
<rect x="854.10" y="25.55" width="8.2" height="8.2" fill="#1e6366"/>
<rect x="609.90" y="32.95" width="8.2" height="8.2" fill="#243251"/>
<rect x="617.30" y="32.95" width="8.2" height="8.2" fill="#243251"/>
<rect x="632.10" y="32.95" width="8.2" height="8.2" fill="#1f4a62"/>
<rect x="780.10" y="32.95" width="8.2" height="8.2" fill="#223e59"/>
<rect x="787.50" y="32.95" width="8.2" height="8.2" fill="#243554"/>
<rect x="839.30" y="32.95" width="8.2" height="8.2" fill="#1e6366"/>
<rect x="846.70" y="32.95" width="8.2" height="8.2" fill="#27725b"/>
<rect x="854.10" y="32.95" width="8.2" height="8.2" fill="#1f4f63"/>
<rect x="609.90" y="40.35" width="8.2" height="8.2" fill="#206664"/>
<rect x="617.30" y="40.35" width="8.2" height="8.2" fill="#5a8c44"/>
<rect x="624.70" y="40.35" width="8.2" height="8.2" fill="#5a8c44"/>
<rect x="632.10" y="40.35" width="8.2" height="8.2" fill="#206664"/>
<rect x="639.50" y="40.35" width="8.2" height="8.2" fill="#1f4a62"/>
<rect x="602.50" y="47.75" width="8.2" height="8.2" fill="#233a57"/>
<rect x="609.90" y="47.75" width="8.2" height="8.2" fill="#728f48"/>
<rect x="617.30" y="47.75" width="8.2" height="8.2" fill="#db919e"/>
<rect x="624.70" y="47.75" width="8.2" height="8.2" fill="#da8e98"/>
<rect x="632.10" y="47.75" width="8.2" height="8.2" fill="#86904c"/>
<rect x="639.50" y="47.75" width="8.2" height="8.2" fill="#1f4a62"/>
<rect x="602.50" y="55.15" width="8.2" height="8.2" fill="#21425d"/>
<rect x="609.90" y="55.15" width="8.2" height="8.2" fill="#c4926c"/>
<rect x="617.30" y="55.15" width="8.2" height="8.2" fill="#d2ccf2"/>
<rect x="624.70" y="55.15" width="8.2" height="8.2" fill="#deaad0"/>
<rect x="632.10" y="55.15" width="8.2" height="8.2" fill="#b0905c"/>
<rect x="639.50" y="55.15" width="8.2" height="8.2" fill="#233a57"/>
<rect x="602.50" y="62.55" width="8.2" height="8.2" fill="#243251"/>
<rect x="609.90" y="62.55" width="8.2" height="8.2" fill="#b0905c"/>
<rect x="617.30" y="62.55" width="8.2" height="8.2" fill="#d5c6ee"/>
<rect x="624.70" y="62.55" width="8.2" height="8.2" fill="#dfa1c0"/>
<rect x="632.10" y="62.55" width="8.2" height="8.2" fill="#728f48"/>
<rect x="891.10" y="62.55" width="8.2" height="8.2" fill="#243251"/>
<rect x="898.50" y="62.55" width="8.2" height="8.2" fill="#21425d"/>
<rect x="905.90" y="62.55" width="8.2" height="8.2" fill="#21425d"/>
<rect x="913.30" y="62.55" width="8.2" height="8.2" fill="#21425d"/>
<rect x="920.70" y="62.55" width="8.2" height="8.2" fill="#243251"/>
<rect x="609.90" y="69.95" width="8.2" height="8.2" fill="#246d5f"/>
<rect x="617.30" y="69.95" width="8.2" height="8.2" fill="#40854c"/>
<rect x="624.70" y="69.95" width="8.2" height="8.2" fill="#2a7957"/>
<rect x="632.10" y="69.95" width="8.2" height="8.2" fill="#1f5664"/>
<rect x="868.90" y="69.95" width="8.2" height="8.2" fill="#243251"/>
<rect x="876.30" y="69.95" width="8.2" height="8.2" fill="#21425d"/>
<rect x="883.70" y="69.95" width="8.2" height="8.2" fill="#21425d"/>
<rect x="891.10" y="69.95" width="8.2" height="8.2" fill="#1f5664"/>
<rect x="898.50" y="69.95" width="8.2" height="8.2" fill="#1e6266"/>
<rect x="905.90" y="69.95" width="8.2" height="8.2" fill="#1e5e65"/>
<rect x="913.30" y="69.95" width="8.2" height="8.2" fill="#1f5664"/>
<rect x="920.70" y="69.95" width="8.2" height="8.2" fill="#1f4e63"/>
<rect x="928.10" y="69.95" width="8.2" height="8.2" fill="#243251"/>
<rect x="669.10" y="77.35" width="8.2" height="8.2" fill="#21425d"/>
<rect x="676.50" y="77.35" width="8.2" height="8.2" fill="#1e5a65"/>
<rect x="683.90" y="77.35" width="8.2" height="8.2" fill="#1e5e65"/>
<rect x="691.30" y="77.35" width="8.2" height="8.2" fill="#1e5a65"/>
<rect x="698.70" y="77.35" width="8.2" height="8.2" fill="#21425d"/>
<rect x="868.90" y="77.35" width="8.2" height="8.2" fill="#243251"/>
<rect x="876.30" y="77.35" width="8.2" height="8.2" fill="#1f5664"/>
<rect x="883.70" y="77.35" width="8.2" height="8.2" fill="#2e8052"/>
<rect x="891.10" y="77.35" width="8.2" height="8.2" fill="#7e904a"/>
<rect x="898.50" y="77.35" width="8.2" height="8.2" fill="#b0905c"/>
<rect x="905.90" y="77.35" width="8.2" height="8.2" fill="#b0905c"/>
<rect x="913.30" y="77.35" width="8.2" height="8.2" fill="#7e904a"/>
<rect x="920.70" y="77.35" width="8.2" height="8.2" fill="#2e8052"/>
<rect x="928.10" y="77.35" width="8.2" height="8.2" fill="#1f5664"/>
<rect x="935.50" y="77.35" width="8.2" height="8.2" fill="#1f4a62"/>
<rect x="565.50" y="84.75" width="8.2" height="8.2" fill="#1e5965"/>
<rect x="572.90" y="84.75" width="8.2" height="8.2" fill="#1f4b62"/>
<rect x="669.10" y="84.75" width="8.2" height="8.2" fill="#1f4e63"/>
<rect x="676.50" y="84.75" width="8.2" height="8.2" fill="#2e8052"/>
<rect x="683.90" y="84.75" width="8.2" height="8.2" fill="#37824f"/>
<rect x="691.30" y="84.75" width="8.2" height="8.2" fill="#2e8052"/>
<rect x="698.70" y="84.75" width="8.2" height="8.2" fill="#1f5263"/>
<rect x="868.90" y="84.75" width="8.2" height="8.2" fill="#21425d"/>
<rect x="876.30" y="84.75" width="8.2" height="8.2" fill="#2e8052"/>
<rect x="883.70" y="84.75" width="8.2" height="8.2" fill="#b89162"/>
<rect x="891.10" y="84.75" width="8.2" height="8.2" fill="#d7c0e9"/>
<rect x="898.50" y="84.75" width="8.2" height="8.2" fill="#ffffff"/>
<rect x="905.90" y="84.75" width="8.2" height="8.2" fill="#ffffff"/>
<rect x="913.30" y="84.75" width="8.2" height="8.2" fill="#cce0f4"/>
<rect x="920.70" y="84.75" width="8.2" height="8.2" fill="#c89173"/>
<rect x="928.10" y="84.75" width="8.2" height="8.2" fill="#2e8052"/>
<rect x="935.50" y="84.75" width="8.2" height="8.2" fill="#1f4e63"/>
<rect x="565.50" y="92.15" width="8.2" height="8.2" fill="#47874a"/>
<rect x="572.90" y="92.15" width="8.2" height="8.2" fill="#2a7956"/>
<rect x="580.30" y="92.15" width="8.2" height="8.2" fill="#252d4e"/>
<rect x="669.10" y="92.15" width="8.2" height="8.2" fill="#1f5263"/>
<rect x="676.50" y="92.15" width="8.2" height="8.2" fill="#7e904a"/>
<rect x="683.90" y="92.15" width="8.2" height="8.2" fill="#bc9166"/>
<rect x="691.30" y="92.15" width="8.2" height="8.2" fill="#48874a"/>
<rect x="698.70" y="92.15" width="8.2" height="8.2" fill="#1f4e63"/>
<rect x="868.90" y="92.15" width="8.2" height="8.2" fill="#1f4a62"/>
<rect x="876.30" y="92.15" width="8.2" height="8.2" fill="#5a8c44"/>
<rect x="883.70" y="92.15" width="8.2" height="8.2" fill="#deaad0"/>
<rect x="891.10" y="92.15" width="8.2" height="8.2" fill="#ffffff"/>
<rect x="898.50" y="92.15" width="8.2" height="8.2" fill="#ffffff"/>
<rect x="905.90" y="92.15" width="8.2" height="8.2" fill="#ffffff"/>
<rect x="913.30" y="92.15" width="8.2" height="8.2" fill="#d8eeee"/>
<rect x="920.70" y="92.15" width="8.2" height="8.2" fill="#7e904a"/>
<rect x="928.10" y="92.15" width="8.2" height="8.2" fill="#1e6266"/>
<rect x="565.50" y="99.55" width="8.2" height="8.2" fill="#39834e"/>
<rect x="572.90" y="99.55" width="8.2" height="8.2" fill="#27745a"/>
<rect x="580.30" y="99.55" width="8.2" height="8.2" fill="#26294b"/>
<rect x="669.10" y="99.55" width="8.2" height="8.2" fill="#1f4e63"/>
<rect x="676.50" y="99.55" width="8.2" height="8.2" fill="#5a8c44"/>
<rect x="683.90" y="99.55" width="8.2" height="8.2" fill="#b0905c"/>
<rect x="691.30" y="99.55" width="8.2" height="8.2" fill="#2e8052"/>
<rect x="698.70" y="99.55" width="8.2" height="8.2" fill="#243251"/>
<rect x="868.90" y="99.55" width="8.2" height="8.2" fill="#1f4a62"/>
<rect x="876.30" y="99.55" width="8.2" height="8.2" fill="#40854c"/>
<rect x="883.70" y="99.55" width="8.2" height="8.2" fill="#cdddf4"/>
<rect x="891.10" y="99.55" width="8.2" height="8.2" fill="#ffffff"/>
<rect x="898.50" y="99.55" width="8.2" height="8.2" fill="#ffffff"/>
<rect x="905.90" y="99.55" width="8.2" height="8.2" fill="#ffffff"/>
<rect x="913.30" y="99.55" width="8.2" height="8.2" fill="#f8fdfa"/>
<rect x="920.70" y="99.55" width="8.2" height="8.2" fill="#728f48"/>
<rect x="928.10" y="99.55" width="8.2" height="8.2" fill="#1e6266"/>
<rect x="565.50" y="106.95" width="8.2" height="8.2" fill="#1f4b62"/>
<rect x="572.90" y="106.95" width="8.2" height="8.2" fill="#243453"/>
<rect x="669.10" y="106.95" width="8.2" height="8.2" fill="#262a4c"/>
<rect x="676.50" y="106.95" width="8.2" height="8.2" fill="#1f4e63"/>
<rect x="683.90" y="106.95" width="8.2" height="8.2" fill="#1f4e63"/>
<rect x="691.30" y="106.95" width="8.2" height="8.2" fill="#243251"/>
<rect x="868.90" y="106.95" width="8.2" height="8.2" fill="#1f4a62"/>
<rect x="876.30" y="106.95" width="8.2" height="8.2" fill="#37824f"/>
<rect x="883.70" y="106.95" width="8.2" height="8.2" fill="#deaad0"/>
<rect x="891.10" y="106.95" width="8.2" height="8.2" fill="#ffffff"/>
<rect x="898.50" y="106.95" width="8.2" height="8.2" fill="#ffffff"/>
<rect x="905.90" y="106.95" width="8.2" height="8.2" fill="#ffffff"/>
<rect x="913.30" y="106.95" width="8.2" height="8.2" fill="#dff2ef"/>
<rect x="920.70" y="106.95" width="8.2" height="8.2" fill="#728f48"/>
<rect x="928.10" y="106.95" width="8.2" height="8.2" fill="#1e5e65"/>
<rect x="868.90" y="114.35" width="8.2" height="8.2" fill="#1f4e63"/>
<rect x="876.30" y="114.35" width="8.2" height="8.2" fill="#5a8c44"/>
<rect x="883.70" y="114.35" width="8.2" height="8.2" fill="#d08e80"/>
<rect x="891.10" y="114.35" width="8.2" height="8.2" fill="#ffffff"/>
<rect x="898.50" y="114.35" width="8.2" height="8.2" fill="#ffffff"/>
<rect x="905.90" y="114.35" width="8.2" height="8.2" fill="#ffffff"/>
<rect x="913.30" y="114.35" width="8.2" height="8.2" fill="#d2ccf2"/>
<rect x="920.70" y="114.35" width="8.2" height="8.2" fill="#728f48"/>
<rect x="928.10" y="114.35" width="8.2" height="8.2" fill="#1f5664"/>
<rect x="868.90" y="121.75" width="8.2" height="8.2" fill="#21425d"/>
<rect x="876.30" y="121.75" width="8.2" height="8.2" fill="#206664"/>
<rect x="883.70" y="121.75" width="8.2" height="8.2" fill="#8d904e"/>
<rect x="891.10" y="121.75" width="8.2" height="8.2" fill="#d8eeee"/>
<rect x="898.50" y="121.75" width="8.2" height="8.2" fill="#ffffff"/>
<rect x="905.90" y="121.75" width="8.2" height="8.2" fill="#f8fdfa"/>
<rect x="913.30" y="121.75" width="8.2" height="8.2" fill="#cce0f4"/>
<rect x="920.70" y="121.75" width="8.2" height="8.2" fill="#d08e80"/>
<rect x="928.10" y="121.75" width="8.2" height="8.2" fill="#1e6266"/>
<rect x="868.90" y="129.15" width="8.2" height="8.2" fill="#262a4c"/>
<rect x="876.30" y="129.15" width="8.2" height="8.2" fill="#1f4e63"/>
<rect x="883.70" y="129.15" width="8.2" height="8.2" fill="#2e8052"/>
<rect x="891.10" y="129.15" width="8.2" height="8.2" fill="#37824f"/>
<rect x="898.50" y="129.15" width="8.2" height="8.2" fill="#5a8c44"/>
<rect x="905.90" y="129.15" width="8.2" height="8.2" fill="#b0905c"/>
<rect x="913.30" y="129.15" width="8.2" height="8.2" fill="#728f48"/>
<rect x="920.70" y="129.15" width="8.2" height="8.2" fill="#2e8052"/>
<rect x="928.10" y="129.15" width="8.2" height="8.2" fill="#1f4e63"/>
<rect x="876.30" y="136.55" width="8.2" height="8.2" fill="#21425d"/>
<rect x="883.70" y="136.55" width="8.2" height="8.2" fill="#1f4e63"/>
<rect x="891.10" y="136.55" width="8.2" height="8.2" fill="#1e5e65"/>
<rect x="898.50" y="136.55" width="8.2" height="8.2" fill="#246d5f"/>
<rect x="905.90" y="136.55" width="8.2" height="8.2" fill="#1e6266"/>
<rect x="913.30" y="136.55" width="8.2" height="8.2" fill="#1f5263"/>
<rect x="920.70" y="136.55" width="8.2" height="8.2" fill="#1f4e63"/>
<rect x="928.10" y="136.55" width="8.2" height="8.2" fill="#21425d"/>
<rect x="883.70" y="143.95" width="8.2" height="8.2" fill="#21425d"/>
<rect x="891.10" y="143.95" width="8.2" height="8.2" fill="#1f4e63"/>
<rect x="898.50" y="143.95" width="8.2" height="8.2" fill="#21425d"/>
<rect x="905.90" y="143.95" width="8.2" height="8.2" fill="#243251"/>
<rect x="617.30" y="151.35" width="8.2" height="8.2" fill="#1f4e63"/>
<rect x="624.70" y="151.35" width="8.2" height="8.2" fill="#1f5664"/>
<rect x="632.10" y="151.35" width="8.2" height="8.2" fill="#1e6266"/>
<rect x="639.50" y="151.35" width="8.2" height="8.2" fill="#21425d"/>
<rect x="617.30" y="158.75" width="8.2" height="8.2" fill="#1f5664"/>
<rect x="624.70" y="158.75" width="8.2" height="8.2" fill="#2a7957"/>
<rect x="632.10" y="158.75" width="8.2" height="8.2" fill="#246d5f"/>
<rect x="639.50" y="158.75" width="8.2" height="8.2" fill="#1f4a62"/>
<rect x="565.50" y="166.15" width="8.2" height="8.2" fill="#1f5464"/>
<rect x="617.30" y="166.15" width="8.2" height="8.2" fill="#1f4e63"/>
<rect x="624.70" y="166.15" width="8.2" height="8.2" fill="#28755a"/>
<rect x="632.10" y="166.15" width="8.2" height="8.2" fill="#1e6266"/>
<rect x="1002.10" y="166.15" width="8.2" height="8.2" fill="#20465f"/>
<rect x="565.50" y="173.55" width="8.2" height="8.2" fill="#2d7e53"/>
<rect x="624.70" y="173.55" width="8.2" height="8.2" fill="#21425d"/>
<rect x="706.10" y="173.55" width="8.2" height="8.2" fill="#253050"/>
<rect x="839.30" y="173.55" width="8.2" height="8.2" fill="#1f5063"/>
<rect x="846.70" y="173.55" width="8.2" height="8.2" fill="#1e5a65"/>
<rect x="854.10" y="173.55" width="8.2" height="8.2" fill="#26294b"/>
<rect x="994.70" y="173.55" width="8.2" height="8.2" fill="#21415c"/>
<rect x="1002.10" y="173.55" width="8.2" height="8.2" fill="#287559"/>
<rect x="565.50" y="180.95" width="8.2" height="8.2" fill="#27735b"/>
<rect x="698.70" y="180.95" width="8.2" height="8.2" fill="#1f5163"/>
<rect x="706.10" y="180.95" width="8.2" height="8.2" fill="#236b60"/>
<rect x="713.50" y="180.95" width="8.2" height="8.2" fill="#1f5163"/>
<rect x="839.30" y="180.95" width="8.2" height="8.2" fill="#1f6464"/>
<rect x="846.70" y="180.95" width="8.2" height="8.2" fill="#256f5d"/>
<rect x="854.10" y="180.95" width="8.2" height="8.2" fill="#20455e"/>
<rect x="987.30" y="180.95" width="8.2" height="8.2" fill="#26294b"/>
<rect x="994.70" y="180.95" width="8.2" height="8.2" fill="#1f5163"/>
<rect x="1002.10" y="180.95" width="8.2" height="8.2" fill="#7c904a"/>
<rect x="565.50" y="188.35" width="8.2" height="8.2" fill="#252c4e"/>
<rect x="698.70" y="188.35" width="8.2" height="8.2" fill="#1f5163"/>
<rect x="706.10" y="188.35" width="8.2" height="8.2" fill="#236b60"/>
<rect x="713.50" y="188.35" width="8.2" height="8.2" fill="#1f5163"/>
<rect x="839.30" y="188.35" width="8.2" height="8.2" fill="#20455e"/>
<rect x="846.70" y="188.35" width="8.2" height="8.2" fill="#1f5063"/>
<rect x="987.30" y="188.35" width="8.2" height="8.2" fill="#252e4f"/>
<rect x="994.70" y="188.35" width="8.2" height="8.2" fill="#1f5564"/>
<rect x="1002.10" y="188.35" width="8.2" height="8.2" fill="#598c44"/>
<rect x="706.10" y="195.75" width="8.2" height="8.2" fill="#253050"/>
<rect x="987.30" y="195.75" width="8.2" height="8.2" fill="#262a4c"/>
<rect x="994.70" y="195.75" width="8.2" height="8.2" fill="#1f5263"/>
<rect x="1002.10" y="195.75" width="8.2" height="8.2" fill="#7e904a"/>
<rect x="994.70" y="203.15" width="8.2" height="8.2" fill="#20465f"/>
<rect x="1002.10" y="203.15" width="8.2" height="8.2" fill="#2f8052"/>
<rect x="743.10" y="210.55" width="8.2" height="8.2" fill="#1f4e63"/>
<rect x="750.50" y="210.55" width="8.2" height="8.2" fill="#1f4e63"/>
<rect x="757.90" y="210.55" width="8.2" height="8.2" fill="#1f4e63"/>
<rect x="765.30" y="210.55" width="8.2" height="8.2" fill="#21425d"/>
<rect x="772.70" y="210.55" width="8.2" height="8.2" fill="#262a4c"/>
<rect x="787.50" y="210.55" width="8.2" height="8.2" fill="#262a4c"/>
<rect x="794.90" y="210.55" width="8.2" height="8.2" fill="#262a4c"/>
<rect x="994.70" y="210.55" width="8.2" height="8.2" fill="#262a4c"/>
<rect x="1002.10" y="210.55" width="8.2" height="8.2" fill="#1f4e63"/>
<rect x="743.10" y="217.95" width="8.2" height="8.2" fill="#2a7957"/>
<rect x="750.50" y="217.95" width="8.2" height="8.2" fill="#2e8052"/>
<rect x="757.90" y="217.95" width="8.2" height="8.2" fill="#246d5f"/>
<rect x="765.30" y="217.95" width="8.2" height="8.2" fill="#1f4e63"/>
<rect x="772.70" y="217.95" width="8.2" height="8.2" fill="#21425d"/>
<rect x="780.10" y="217.95" width="8.2" height="8.2" fill="#243251"/>
<rect x="787.50" y="217.95" width="8.2" height="8.2" fill="#21425d"/>
<rect x="794.90" y="217.95" width="8.2" height="8.2" fill="#1f4a62"/>
<rect x="802.30" y="217.95" width="8.2" height="8.2" fill="#21425d"/>
<rect x="809.70" y="217.95" width="8.2" height="8.2" fill="#243251"/>
<rect x="817.10" y="217.95" width="8.2" height="8.2" fill="#262a4c"/>
<rect x="565.50" y="225.35" width="8.2" height="8.2" fill="#236c5f"/>
<rect x="743.10" y="225.35" width="8.2" height="8.2" fill="#2a7957"/>
<rect x="750.50" y="225.35" width="8.2" height="8.2" fill="#7e904a"/>
<rect x="757.90" y="225.35" width="8.2" height="8.2" fill="#2e8052"/>
<rect x="765.30" y="225.35" width="8.2" height="8.2" fill="#1f5664"/>
<rect x="772.70" y="225.35" width="8.2" height="8.2" fill="#1f5664"/>
<rect x="780.10" y="225.35" width="8.2" height="8.2" fill="#1f4e63"/>
<rect x="787.50" y="225.35" width="8.2" height="8.2" fill="#1f5263"/>
<rect x="794.90" y="225.35" width="8.2" height="8.2" fill="#1f5263"/>
<rect x="802.30" y="225.35" width="8.2" height="8.2" fill="#1f5263"/>
<rect x="809.70" y="225.35" width="8.2" height="8.2" fill="#1f4e63"/>
<rect x="817.10" y="225.35" width="8.2" height="8.2" fill="#21425d"/>
<rect x="824.50" y="225.35" width="8.2" height="8.2" fill="#243251"/>
<rect x="565.50" y="232.75" width="8.2" height="8.2" fill="#c4926c"/>
<rect x="572.90" y="232.75" width="8.2" height="8.2" fill="#243151"/>
<rect x="743.10" y="232.75" width="8.2" height="8.2" fill="#206664"/>
<rect x="750.50" y="232.75" width="8.2" height="8.2" fill="#5a8c44"/>
<rect x="757.90" y="232.75" width="8.2" height="8.2" fill="#2e8052"/>
<rect x="765.30" y="232.75" width="8.2" height="8.2" fill="#2a7957"/>
<rect x="772.70" y="232.75" width="8.2" height="8.2" fill="#2a7957"/>
<rect x="780.10" y="232.75" width="8.2" height="8.2" fill="#2a7957"/>
<rect x="787.50" y="232.75" width="8.2" height="8.2" fill="#246d5f"/>
<rect x="794.90" y="232.75" width="8.2" height="8.2" fill="#5a8c44"/>
<rect x="802.30" y="232.75" width="8.2" height="8.2" fill="#5a8c44"/>
<rect x="809.70" y="232.75" width="8.2" height="8.2" fill="#5a8c44"/>
<rect x="817.10" y="232.75" width="8.2" height="8.2" fill="#2e8052"/>
<rect x="824.50" y="232.75" width="8.2" height="8.2" fill="#1f4e63"/>
<rect x="565.50" y="240.15" width="8.2" height="8.2" fill="#de97ac"/>
<rect x="572.90" y="240.15" width="8.2" height="8.2" fill="#1e5764"/>
<rect x="743.10" y="240.15" width="8.2" height="8.2" fill="#1f4e63"/>
<rect x="750.50" y="240.15" width="8.2" height="8.2" fill="#2e8052"/>
<rect x="757.90" y="240.15" width="8.2" height="8.2" fill="#48874a"/>
<rect x="765.30" y="240.15" width="8.2" height="8.2" fill="#d08e80"/>
<rect x="772.70" y="240.15" width="8.2" height="8.2" fill="#db919e"/>
<rect x="780.10" y="240.15" width="8.2" height="8.2" fill="#d58e8c"/>
<rect x="787.50" y="240.15" width="8.2" height="8.2" fill="#c4926c"/>
<rect x="794.90" y="240.15" width="8.2" height="8.2" fill="#d7c0e9"/>
<rect x="802.30" y="240.15" width="8.2" height="8.2" fill="#dff2ef"/>
<rect x="809.70" y="240.15" width="8.2" height="8.2" fill="#d0d2f3"/>
<rect x="817.10" y="240.15" width="8.2" height="8.2" fill="#b89162"/>
<rect x="824.50" y="240.15" width="8.2" height="8.2" fill="#2e8052"/>
<rect x="831.90" y="240.15" width="8.2" height="8.2" fill="#1f4a62"/>
<rect x="565.50" y="247.55" width="8.2" height="8.2" fill="#d18e82"/>
<rect x="572.90" y="247.55" width="8.2" height="8.2" fill="#21405b"/>
<rect x="743.10" y="247.55" width="8.2" height="8.2" fill="#1f4a62"/>
<rect x="750.50" y="247.55" width="8.2" height="8.2" fill="#2e8052"/>
<rect x="757.90" y="247.55" width="8.2" height="8.2" fill="#de96ab"/>
<rect x="765.30" y="247.55" width="8.2" height="8.2" fill="#ffffff"/>
<rect x="772.70" y="247.55" width="8.2" height="8.2" fill="#ffffff"/>
<rect x="780.10" y="247.55" width="8.2" height="8.2" fill="#f2fbf6"/>
<rect x="787.50" y="247.55" width="8.2" height="8.2" fill="#d1e6f2"/>
<rect x="794.90" y="247.55" width="8.2" height="8.2" fill="#ffffff"/>
<rect x="802.30" y="247.55" width="8.2" height="8.2" fill="#ffffff"/>
<rect x="809.70" y="247.55" width="8.2" height="8.2" fill="#ffffff"/>
<rect x="817.10" y="247.55" width="8.2" height="8.2" fill="#d1e6f2"/>
<rect x="824.50" y="247.55" width="8.2" height="8.2" fill="#7e904a"/>
<rect x="831.90" y="247.55" width="8.2" height="8.2" fill="#1f4e63"/>
<rect x="565.50" y="254.95" width="8.2" height="8.2" fill="#338151"/>
<rect x="743.10" y="254.95" width="8.2" height="8.2" fill="#21425d"/>
<rect x="750.50" y="254.95" width="8.2" height="8.2" fill="#2e8052"/>
<rect x="757.90" y="254.95" width="8.2" height="8.2" fill="#f2fbf6"/>
<rect x="765.30" y="254.95" width="8.2" height="8.2" fill="#ffffff"/>
<rect x="772.70" y="254.95" width="8.2" height="8.2" fill="#ffffff"/>
<rect x="780.10" y="254.95" width="8.2" height="8.2" fill="#ffffff"/>
<rect x="787.50" y="254.95" width="8.2" height="8.2" fill="#ffffff"/>
<rect x="794.90" y="254.95" width="8.2" height="8.2" fill="#ffffff"/>
<rect x="802.30" y="254.95" width="8.2" height="8.2" fill="#ffffff"/>
<rect x="809.70" y="254.95" width="8.2" height="8.2" fill="#ffffff"/>
<rect x="817.10" y="254.95" width="8.2" height="8.2" fill="#dff2ef"/>
<rect x="824.50" y="254.95" width="8.2" height="8.2" fill="#7e904a"/>
<rect x="831.90" y="254.95" width="8.2" height="8.2" fill="#1f4e63"/>
<rect x="743.10" y="262.35" width="8.2" height="8.2" fill="#21425d"/>
<rect x="750.50" y="262.35" width="8.2" height="8.2" fill="#2e8052"/>
<rect x="757.90" y="262.35" width="8.2" height="8.2" fill="#ffffff"/>
<rect x="765.30" y="262.35" width="8.2" height="8.2" fill="#ffffff"/>
<rect x="772.70" y="262.35" width="8.2" height="8.2" fill="#ffffff"/>
<rect x="780.10" y="262.35" width="8.2" height="8.2" fill="#ffffff"/>
<rect x="787.50" y="262.35" width="8.2" height="8.2" fill="#ffffff"/>
<rect x="794.90" y="262.35" width="8.2" height="8.2" fill="#ffffff"/>
<rect x="802.30" y="262.35" width="8.2" height="8.2" fill="#ffffff"/>
<rect x="809.70" y="262.35" width="8.2" height="8.2" fill="#ffffff"/>
<rect x="817.10" y="262.35" width="8.2" height="8.2" fill="#d1e6f2"/>
<rect x="824.50" y="262.35" width="8.2" height="8.2" fill="#37824f"/>
<rect x="831.90" y="262.35" width="8.2" height="8.2" fill="#1f4a62"/>
<rect x="743.10" y="269.75" width="8.2" height="8.2" fill="#243251"/>
<rect x="750.50" y="269.75" width="8.2" height="8.2" fill="#246d5f"/>
<rect x="757.90" y="269.75" width="8.2" height="8.2" fill="#f2fbf6"/>
<rect x="765.30" y="269.75" width="8.2" height="8.2" fill="#ffffff"/>
<rect x="772.70" y="269.75" width="8.2" height="8.2" fill="#ffffff"/>
<rect x="780.10" y="269.75" width="8.2" height="8.2" fill="#ffffff"/>
<rect x="787.50" y="269.75" width="8.2" height="8.2" fill="#cce0f4"/>
<rect x="794.90" y="269.75" width="8.2" height="8.2" fill="#ffffff"/>
<rect x="802.30" y="269.75" width="8.2" height="8.2" fill="#ffffff"/>
<rect x="809.70" y="269.75" width="8.2" height="8.2" fill="#ffffff"/>
<rect x="817.10" y="269.75" width="8.2" height="8.2" fill="#de96ab"/>
<rect x="824.50" y="269.75" width="8.2" height="8.2" fill="#2e8052"/>
<rect x="831.90" y="269.75" width="8.2" height="8.2" fill="#21425d"/>
<rect x="750.50" y="277.15" width="8.2" height="8.2" fill="#1f5664"/>
<rect x="757.90" y="277.15" width="8.2" height="8.2" fill="#de96ab"/>
<rect x="765.30" y="277.15" width="8.2" height="8.2" fill="#ffffff"/>
<rect x="772.70" y="277.15" width="8.2" height="8.2" fill="#ffffff"/>
<rect x="780.10" y="277.15" width="8.2" height="8.2" fill="#d0d2f3"/>
<rect x="787.50" y="277.15" width="8.2" height="8.2" fill="#c89173"/>
<rect x="794.90" y="277.15" width="8.2" height="8.2" fill="#9c9052"/>
<rect x="802.30" y="277.15" width="8.2" height="8.2" fill="#7e904a"/>
<rect x="809.70" y="277.15" width="8.2" height="8.2" fill="#2e8052"/>
<rect x="817.10" y="277.15" width="8.2" height="8.2" fill="#2e8052"/>
<rect x="824.50" y="277.15" width="8.2" height="8.2" fill="#206664"/>
<rect x="861.50" y="277.15" width="8.2" height="8.2" fill="#243352"/>
<rect x="868.90" y="277.15" width="8.2" height="8.2" fill="#1f5364"/>
<rect x="876.30" y="277.15" width="8.2" height="8.2" fill="#243352"/>
<rect x="750.50" y="284.55" width="8.2" height="8.2" fill="#1f4e63"/>
<rect x="757.90" y="284.55" width="8.2" height="8.2" fill="#1e6266"/>
<rect x="765.30" y="284.55" width="8.2" height="8.2" fill="#2a7957"/>
<rect x="772.70" y="284.55" width="8.2" height="8.2" fill="#2a7957"/>
<rect x="780.10" y="284.55" width="8.2" height="8.2" fill="#48874a"/>
<rect x="787.50" y="284.55" width="8.2" height="8.2" fill="#2e8052"/>
<rect x="794.90" y="284.55" width="8.2" height="8.2" fill="#246d5f"/>
<rect x="802.30" y="284.55" width="8.2" height="8.2" fill="#1f4e63"/>
<rect x="809.70" y="284.55" width="8.2" height="8.2" fill="#243251"/>
<rect x="861.50" y="284.55" width="8.2" height="8.2" fill="#1f4a62"/>
<rect x="868.90" y="284.55" width="8.2" height="8.2" fill="#1e6365"/>
<rect x="876.30" y="284.55" width="8.2" height="8.2" fill="#1f4a62"/>
<rect x="750.50" y="291.95" width="8.2" height="8.2" fill="#1f4a62"/>
<rect x="757.90" y="291.95" width="8.2" height="8.2" fill="#1f5664"/>
<rect x="765.30" y="291.95" width="8.2" height="8.2" fill="#2e8052"/>
<rect x="772.70" y="291.95" width="8.2" height="8.2" fill="#b0905c"/>
<rect x="780.10" y="291.95" width="8.2" height="8.2" fill="#b0905c"/>
<rect x="787.50" y="291.95" width="8.2" height="8.2" fill="#48874a"/>
<rect x="794.90" y="291.95" width="8.2" height="8.2" fill="#2e8052"/>
<rect x="802.30" y="291.95" width="8.2" height="8.2" fill="#1f5664"/>
<rect x="809.70" y="291.95" width="8.2" height="8.2" fill="#262a4c"/>
<rect x="868.90" y="291.95" width="8.2" height="8.2" fill="#223a57"/>
<rect x="565.50" y="299.35" width="8.2" height="8.2" fill="#1e5664"/>
<rect x="750.50" y="299.35" width="8.2" height="8.2" fill="#21425d"/>
<rect x="757.90" y="299.35" width="8.2" height="8.2" fill="#1e6266"/>
<rect x="765.30" y="299.35" width="8.2" height="8.2" fill="#b0905c"/>
<rect x="772.70" y="299.35" width="8.2" height="8.2" fill="#cce0f4"/>
<rect x="780.10" y="299.35" width="8.2" height="8.2" fill="#e6f6f0"/>
<rect x="787.50" y="299.35" width="8.2" height="8.2" fill="#d0d2f3"/>
<rect x="794.90" y="299.35" width="8.2" height="8.2" fill="#b0905c"/>
<rect x="802.30" y="299.35" width="8.2" height="8.2" fill="#2e8052"/>
<rect x="809.70" y="299.35" width="8.2" height="8.2" fill="#21425d"/>
<rect x="565.50" y="306.75" width="8.2" height="8.2" fill="#308151"/>
<rect x="572.90" y="306.75" width="8.2" height="8.2" fill="#1f4d62"/>
<rect x="750.50" y="306.75" width="8.2" height="8.2" fill="#21425d"/>
<rect x="757.90" y="306.75" width="8.2" height="8.2" fill="#1e6266"/>
<rect x="765.30" y="306.75" width="8.2" height="8.2" fill="#d7c0e9"/>
<rect x="772.70" y="306.75" width="8.2" height="8.2" fill="#ffffff"/>
<rect x="780.10" y="306.75" width="8.2" height="8.2" fill="#ffffff"/>
<rect x="787.50" y="306.75" width="8.2" height="8.2" fill="#ffffff"/>
<rect x="794.90" y="306.75" width="8.2" height="8.2" fill="#d7c0e9"/>
<rect x="802.30" y="306.75" width="8.2" height="8.2" fill="#2e8052"/>
<rect x="809.70" y="306.75" width="8.2" height="8.2" fill="#21425d"/>
<rect x="565.50" y="314.15" width="8.2" height="8.2" fill="#287659"/>
<rect x="572.90" y="314.15" width="8.2" height="8.2" fill="#223e5a"/>
<rect x="750.50" y="314.15" width="8.2" height="8.2" fill="#1f4a62"/>
<rect x="757.90" y="314.15" width="8.2" height="8.2" fill="#1e5e65"/>
<rect x="765.30" y="314.15" width="8.2" height="8.2" fill="#cce0f4"/>
<rect x="772.70" y="314.15" width="8.2" height="8.2" fill="#ffffff"/>
<rect x="780.10" y="314.15" width="8.2" height="8.2" fill="#ffffff"/>
<rect x="787.50" y="314.15" width="8.2" height="8.2" fill="#ffffff"/>
<rect x="794.90" y="314.15" width="8.2" height="8.2" fill="#d7c0e9"/>
<rect x="802.30" y="314.15" width="8.2" height="8.2" fill="#2a7957"/>
<rect x="809.70" y="314.15" width="8.2" height="8.2" fill="#21425d"/>
<rect x="565.50" y="321.55" width="8.2" height="8.2" fill="#253050"/>
<rect x="750.50" y="321.55" width="8.2" height="8.2" fill="#243251"/>
<rect x="757.90" y="321.55" width="8.2" height="8.2" fill="#1f5664"/>
<rect x="765.30" y="321.55" width="8.2" height="8.2" fill="#d0d2f3"/>
<rect x="772.70" y="321.55" width="8.2" height="8.2" fill="#ffffff"/>
<rect x="780.10" y="321.55" width="8.2" height="8.2" fill="#ffffff"/>
<rect x="787.50" y="321.55" width="8.2" height="8.2" fill="#ffffff"/>
<rect x="794.90" y="321.55" width="8.2" height="8.2" fill="#db919e"/>
<rect x="802.30" y="321.55" width="8.2" height="8.2" fill="#246d5f"/>
<rect x="809.70" y="321.55" width="8.2" height="8.2" fill="#21425d"/>
<rect x="750.50" y="328.95" width="8.2" height="8.2" fill="#243251"/>
<rect x="757.90" y="328.95" width="8.2" height="8.2" fill="#1f5664"/>
<rect x="765.30" y="328.95" width="8.2" height="8.2" fill="#c4926c"/>
<rect x="772.70" y="328.95" width="8.2" height="8.2" fill="#d8eeee"/>
<rect x="780.10" y="328.95" width="8.2" height="8.2" fill="#dff2ef"/>
<rect x="787.50" y="328.95" width="8.2" height="8.2" fill="#dcb4e0"/>
<rect x="794.90" y="328.95" width="8.2" height="8.2" fill="#7e904a"/>
<rect x="802.30" y="328.95" width="8.2" height="8.2" fill="#1f5664"/>
<rect x="809.70" y="328.95" width="8.2" height="8.2" fill="#262a4c"/>
<rect x="580.30" y="336.35" width="8.2" height="8.2" fill="#253050"/>
<rect x="587.70" y="336.35" width="8.2" height="8.2" fill="#204760"/>
<rect x="757.90" y="336.35" width="8.2" height="8.2" fill="#21425d"/>
<rect x="765.30" y="336.35" width="8.2" height="8.2" fill="#1f4e63"/>
<rect x="772.70" y="336.35" width="8.2" height="8.2" fill="#1f4e63"/>
<rect x="780.10" y="336.35" width="8.2" height="8.2" fill="#1e5e65"/>
<rect x="787.50" y="336.35" width="8.2" height="8.2" fill="#1f5664"/>
<rect x="794.90" y="336.35" width="8.2" height="8.2" fill="#1f4e63"/>
<rect x="802.30" y="336.35" width="8.2" height="8.2" fill="#243251"/>
<rect x="580.30" y="343.75" width="8.2" height="8.2" fill="#236b60"/>
<rect x="587.70" y="343.75" width="8.2" height="8.2" fill="#2c7c55"/>
<rect x="595.10" y="343.75" width="8.2" height="8.2" fill="#1e5664"/>
<rect x="765.30" y="343.75" width="8.2" height="8.2" fill="#262a4c"/>
<rect x="772.70" y="343.75" width="8.2" height="8.2" fill="#262a4c"/>
<rect x="780.10" y="343.75" width="8.2" height="8.2" fill="#262a4c"/>
<rect x="787.50" y="343.75" width="8.2" height="8.2" fill="#262a4c"/>
<rect x="580.30" y="351.15" width="8.2" height="8.2" fill="#236b60"/>
<rect x="587.70" y="351.15" width="8.2" height="8.2" fill="#2c7c55"/>
<rect x="595.10" y="351.15" width="8.2" height="8.2" fill="#1e5664"/>
<rect x="580.30" y="358.55" width="8.2" height="8.2" fill="#253050"/>
<rect x="587.70" y="358.55" width="8.2" height="8.2" fill="#204760"/>
<rect x="935.50" y="358.55" width="8.2" height="8.2" fill="#1f4e63"/>
<rect x="942.90" y="358.55" width="8.2" height="8.2" fill="#1f5664"/>
<rect x="950.30" y="358.55" width="8.2" height="8.2" fill="#21425d"/>
<rect x="928.10" y="365.95" width="8.2" height="8.2" fill="#243251"/>
<rect x="935.50" y="365.95" width="8.2" height="8.2" fill="#206664"/>
<rect x="942.90" y="365.95" width="8.2" height="8.2" fill="#246d5f"/>
<rect x="950.30" y="365.95" width="8.2" height="8.2" fill="#1e5a65"/>
<rect x="957.70" y="365.95" width="8.2" height="8.2" fill="#262a4c"/>
<rect x="928.10" y="373.35" width="8.2" height="8.2" fill="#1f5664"/>
<rect x="935.50" y="373.35" width="8.2" height="8.2" fill="#37824f"/>
<rect x="942.90" y="373.35" width="8.2" height="8.2" fill="#5a8c44"/>
<rect x="950.30" y="373.35" width="8.2" height="8.2" fill="#2e8052"/>
<rect x="957.70" y="373.35" width="8.2" height="8.2" fill="#243251"/>
<rect x="928.10" y="380.75" width="8.2" height="8.2" fill="#262a4c"/>
<rect x="935.50" y="380.75" width="8.2" height="8.2" fill="#728f48"/>
<rect x="942.90" y="380.75" width="8.2" height="8.2" fill="#b89162"/>
<rect x="950.30" y="380.75" width="8.2" height="8.2" fill="#48874a"/>
<rect x="957.70" y="380.75" width="8.2" height="8.2" fill="#21425d"/>
<rect x="639.50" y="388.15" width="8.2" height="8.2" fill="#1f4e63"/>
<rect x="646.90" y="388.15" width="8.2" height="8.2" fill="#21425d"/>
<rect x="654.30" y="388.15" width="8.2" height="8.2" fill="#21425d"/>
<rect x="935.50" y="388.15" width="8.2" height="8.2" fill="#37824f"/>
<rect x="942.90" y="388.15" width="8.2" height="8.2" fill="#5a8c44"/>
<rect x="950.30" y="388.15" width="8.2" height="8.2" fill="#2e8052"/>
<rect x="639.50" y="395.55" width="8.2" height="8.2" fill="#21425d"/>
<rect x="646.90" y="395.55" width="8.2" height="8.2" fill="#1e6266"/>
<rect x="654.30" y="395.55" width="8.2" height="8.2" fill="#1e5e65"/>
<rect x="661.70" y="395.55" width="8.2" height="8.2" fill="#262a4c"/>
<rect x="942.90" y="395.55" width="8.2" height="8.2" fill="#21425d"/>
<rect x="639.50" y="402.95" width="8.2" height="8.2" fill="#1e5e65"/>
<rect x="646.90" y="402.95" width="8.2" height="8.2" fill="#2e8052"/>
<rect x="654.30" y="402.95" width="8.2" height="8.2" fill="#2a7957"/>
<rect x="661.70" y="402.95" width="8.2" height="8.2" fill="#1f5664"/>
<rect x="639.50" y="410.35" width="8.2" height="8.2" fill="#1f5664"/>
<rect x="646.90" y="410.35" width="8.2" height="8.2" fill="#2e8052"/>
<rect x="654.30" y="410.35" width="8.2" height="8.2" fill="#2a7957"/>
<rect x="661.70" y="410.35" width="8.2" height="8.2" fill="#1f4a62"/>
<rect x="646.90" y="417.75" width="8.2" height="8.2" fill="#21425d"/>
<rect x="654.30" y="417.75" width="8.2" height="8.2" fill="#243251"/>
<rect x="624.70" y="439.95" width="8.2" height="8.2" fill="#1f4e63"/>
<rect x="632.10" y="439.95" width="8.2" height="8.2" fill="#2e8052"/>
<rect x="639.50" y="439.95" width="8.2" height="8.2" fill="#2e8052"/>
<rect x="646.90" y="439.95" width="8.2" height="8.2" fill="#1f4e63"/>
<rect x="624.70" y="447.35" width="8.2" height="8.2" fill="#2e8052"/>
<rect x="632.10" y="447.35" width="8.2" height="8.2" fill="#b0905c"/>
<rect x="639.50" y="447.35" width="8.2" height="8.2" fill="#b0905c"/>
<rect x="646.90" y="447.35" width="8.2" height="8.2" fill="#2e8052"/>
<rect x="654.30" y="447.35" width="8.2" height="8.2" fill="#21425d"/>
<rect x="624.70" y="454.75" width="8.2" height="8.2" fill="#5a8c44"/>
<rect x="632.10" y="454.75" width="8.2" height="8.2" fill="#da8e98"/>
<rect x="639.50" y="454.75" width="8.2" height="8.2" fill="#d58e8c"/>
<rect x="646.90" y="454.75" width="8.2" height="8.2" fill="#5a8c44"/>
<rect x="654.30" y="454.75" width="8.2" height="8.2" fill="#21425d"/>
<rect x="624.70" y="462.15" width="8.2" height="8.2" fill="#37824f"/>
<rect x="632.10" y="462.15" width="8.2" height="8.2" fill="#d58e8c"/>
<rect x="639.50" y="462.15" width="8.2" height="8.2" fill="#d58e8c"/>
<rect x="646.90" y="462.15" width="8.2" height="8.2" fill="#2e8052"/>
<rect x="654.30" y="462.15" width="8.2" height="8.2" fill="#21425d"/>
<rect x="624.70" y="469.55" width="8.2" height="8.2" fill="#21425d"/>
<rect x="632.10" y="469.55" width="8.2" height="8.2" fill="#2a7957"/>
<rect x="639.50" y="469.55" width="8.2" height="8.2" fill="#206664"/>
<rect x="646.90" y="469.55" width="8.2" height="8.2" fill="#1f4e63"/>
<rect x="809.70" y="491.75" width="8.2" height="8.2" fill="#262a4c"/>
<rect x="817.10" y="491.75" width="8.2" height="8.2" fill="#262a4c"/>
<rect x="572.90" y="499.15" width="8.2" height="8.2" fill="#1e5a65"/>
<rect x="580.30" y="499.15" width="8.2" height="8.2" fill="#226961"/>
<rect x="587.70" y="499.15" width="8.2" height="8.2" fill="#20445e"/>
<rect x="802.30" y="499.15" width="8.2" height="8.2" fill="#21405b"/>
<rect x="809.70" y="499.15" width="8.2" height="8.2" fill="#297758"/>
<rect x="817.10" y="499.15" width="8.2" height="8.2" fill="#297758"/>
<rect x="824.50" y="499.15" width="8.2" height="8.2" fill="#21405b"/>
</g>
<ellipse cx="791.4" cy="259.3" rx="206" ry="91" transform="rotate(-13.7 791.4 259.3)" fill="none" stroke="#f0e028" stroke-width="2"/>
<ellipse cx="791.4" cy="259.3" rx="177" ry="77.5" transform="rotate(-13.9 791.4 259.3)" fill="none" stroke="#22e022" stroke-width="2"/>
<ellipse cx="791.4" cy="259.3" rx="67" ry="27.5" transform="rotate(-14.5 791.4 259.3)" fill="none" stroke="#ee2a1e" stroke-width="2"/>
<line x1="571" y1="259.3" x2="1004" y2="259.3" stroke="#22d8f0" stroke-width="1.2"/>
<rect x="574.9" y="257.5" width="3.6" height="3.6" fill="#22d8f0"/>
<line x1="791.4" y1="44.7" x2="791.4" y2="473" stroke="#f0b8b0" stroke-width="1.1"/>
<circle cx="791.4" cy="44.7" r="2.2" fill="#f4c0b8"/>
<circle cx="791.4" cy="473" r="2.2" fill="#f4c0b8"/>
</svg>
<rect x="1006.7" y="351.6" width="6.2" height="12.9" rx="3.1" fill="#c2c2c2"/>
<rect x="705.3" y="508.2" width="12.9" height="4.7" rx="2.35" fill="#c2c2c2"/>
<text x="566.6" y="534.0" font-size="9.6" fill="#141414" stroke="#141414" stroke-width="0.3" font-weight="normal" text-anchor="start" textLength="39.1" lengthAdjust="spacingAndGlyphs">Magnify:</text>
<circle cx="621.5" cy="530.0" r="5.6" fill="url(#rad)" stroke="#a8a8a8" stroke-width="0.9"/>
<text x="631.5" y="534.0" font-size="9.6" fill="#141414" stroke="#141414" stroke-width="0.3" font-weight="normal" text-anchor="start" textLength="10.5" lengthAdjust="spacingAndGlyphs">1x</text>
<circle cx="666.6" cy="530.0" r="5.6" fill="url(#rad)" stroke="#a8a8a8" stroke-width="0.9"/>
<text x="676.5" y="534.0" font-size="9.6" fill="#141414" stroke="#141414" stroke-width="0.3" font-weight="normal" text-anchor="start" textLength="11.2" lengthAdjust="spacingAndGlyphs">5x</text>
<circle cx="711.6" cy="530.0" r="5.6" fill="url(#rad)" stroke="#a8a8a8" stroke-width="0.9"/>
<circle cx="711.6" cy="530.0" r="1.9" fill="#2a2a2a"/>
<text x="721.7" y="534.0" font-size="9.6" fill="#141414" stroke="#141414" stroke-width="0.3" font-weight="normal" text-anchor="start" textLength="16.9" lengthAdjust="spacingAndGlyphs">10x</text>
<circle cx="756.8" cy="530.0" r="5.6" fill="url(#rad)" stroke="#a8a8a8" stroke-width="0.9"/>
<text x="766.2" y="534.0" font-size="9.6" fill="#141414" stroke="#141414" stroke-width="0.3" font-weight="normal" text-anchor="start" textLength="17.6" lengthAdjust="spacingAndGlyphs">20x</text>
<rect x="798.4" y="521.8" width="216.5" height="13.9" rx="3" fill="url(#bg)" stroke="#a9a9a9" stroke-width="1"/>
<line x1="799.9" y1="536.5" x2="1013.4" y2="536.5" stroke="#d2d2d2" stroke-width="0.8"/>
<text x="877.6" y="532.4" font-size="9.6" fill="#141414" stroke="#141414" stroke-width="0.3" font-weight="normal" text-anchor="start" textLength="58.0" lengthAdjust="spacingAndGlyphs">Find Aperture</text>
<rect x="566.6" y="538.7" width="443.4" height="14.7" fill="#2a2a2a"/>
<rect x="567.4" y="539.6" width="20.57" height="12.9" fill="#000000"/>
<rect x="589.6" y="539.6" width="20.57" height="12.9" fill="#272b4e"/>
<rect x="611.7" y="539.6" width="20.57" height="12.9" fill="#1c495a"/>
<rect x="633.9" y="539.6" width="20.57" height="12.9" fill="#1b5d5c"/>
<rect x="656.1" y="539.6" width="20.57" height="12.9" fill="#2a7a52"/>
<rect x="678.2" y="539.6" width="20.57" height="12.9" fill="#4d8644"/>
<rect x="700.4" y="539.6" width="20.57" height="12.9" fill="#7c8a4a"/>
<rect x="722.6" y="539.6" width="20.57" height="12.9" fill="#9a8a52"/>
<rect x="744.8" y="539.6" width="20.57" height="12.9" fill="#ad8a5c"/>
<rect x="766.9" y="539.6" width="20.57" height="12.9" fill="#bd8a6c"/>
<rect x="789.1" y="539.6" width="20.57" height="12.9" fill="#cf8a80"/>
<rect x="811.3" y="539.6" width="20.57" height="12.9" fill="#d68a96"/>
<rect x="833.4" y="539.6" width="20.57" height="12.9" fill="#de90b0"/>
<rect x="855.6" y="539.6" width="20.57" height="12.9" fill="#d8aad8"/>
<rect x="877.8" y="539.6" width="20.57" height="12.9" fill="#cac8f0"/>
<rect x="900.0" y="539.6" width="20.57" height="12.9" fill="#c8def2"/>
<rect x="922.1" y="539.6" width="20.57" height="12.9" fill="#d4ecec"/>
<rect x="944.3" y="539.6" width="20.57" height="12.9" fill="#e2f4ee"/>
<rect x="966.5" y="539.6" width="20.57" height="12.9" fill="#f4fbf7"/>
<rect x="988.6" y="539.6" width="20.57" height="12.9" fill="#ffffff"/>
<text x="566.6" y="566.7" font-size="8.9" fill="#222" stroke="#222" stroke-width="0.18" font-weight="normal" text-anchor="start" textLength="266.0" lengthAdjust="spacingAndGlyphs">Image: [1]  ztf_000513_zr_c14_q2_refimg.fits [1:1] (primary image)</text>
</svg></body></html>
